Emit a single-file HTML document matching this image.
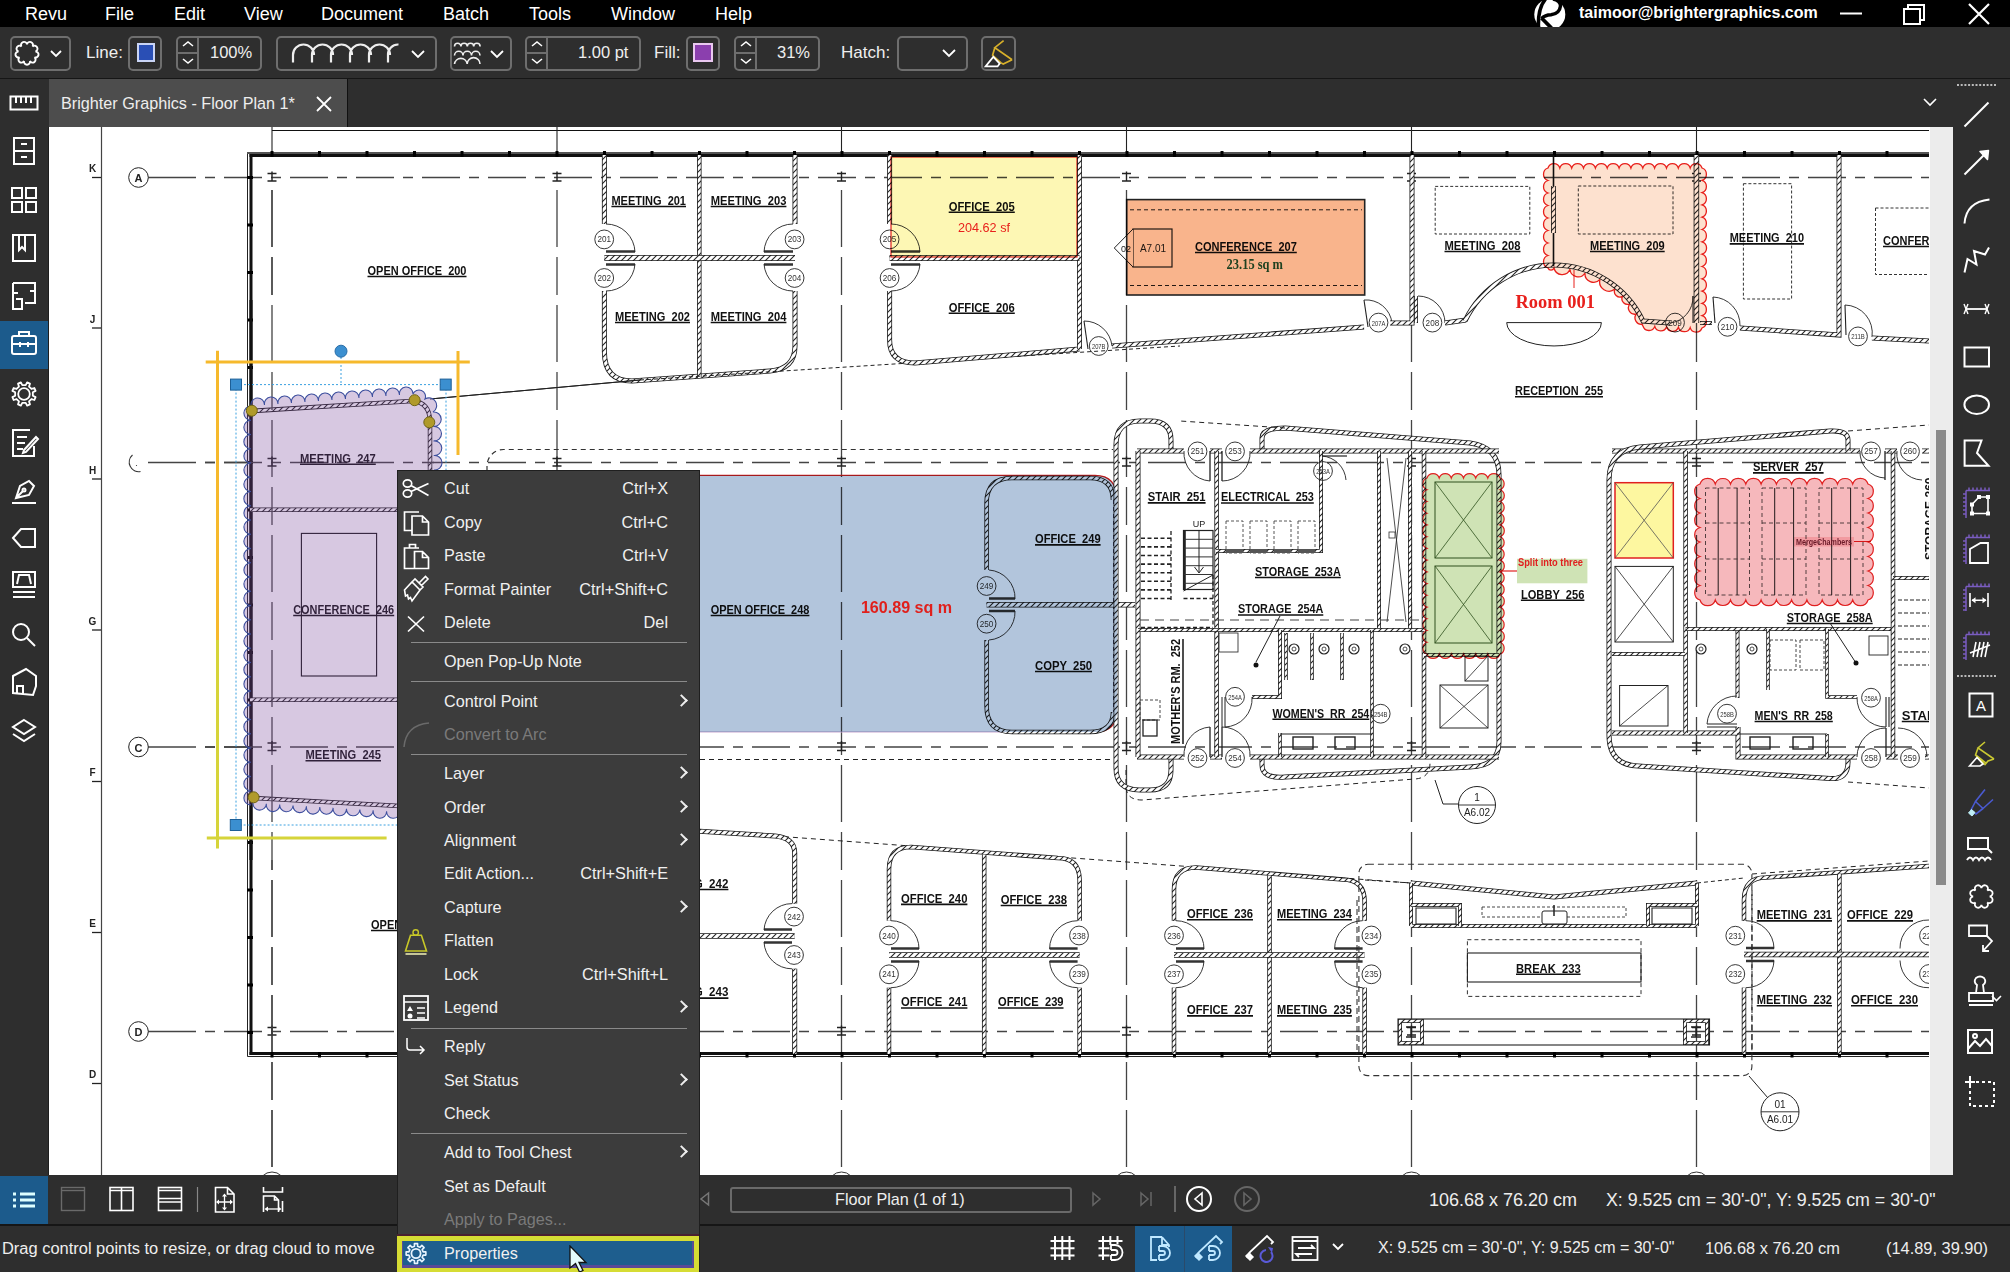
<!DOCTYPE html>
<html><head><meta charset="utf-8">
<style>
*{margin:0;padding:0;box-sizing:border-box}
html,body{width:2010px;height:1272px;overflow:hidden;background:#2d2d2d;font-family:"Liberation Sans",sans-serif;color:#fff;position:relative}
.a{position:absolute}
#menubar{left:0;top:0;width:2010px;height:27px;background:#000}
#menubar span{position:absolute;top:4px;font-size:18px;color:#fff;white-space:nowrap}
#toolbar{left:0;top:27px;width:2010px;height:52px;background:#2e2e2e;border-bottom:1px solid #161616}
.box{position:absolute;border:2px solid #6e6e6e;border-radius:5px;top:9px;height:35px}
.tl{position:absolute;font-size:17px;color:#eee;top:16px;white-space:nowrap}
#tabbar{left:0;top:79px;width:2010px;height:48px;background:#2e2e2e}
#tab{left:49px;top:79px;width:299px;height:48px;background:#4d4d4d;border-right:1px solid #111}
#sidebar{left:0;top:127px;width:49px;height:1049px;background:#2e2e2e;border-right:1px solid #1e1e1e}
#rightbar{left:1953px;top:127px;width:57px;height:1049px;background:#2e2e2e}
#bottombar{left:0;top:1175px;width:2010px;height:51px;background:#2e2e2e;border-bottom:2px solid #161616}
#statusbar{left:0;top:1226px;width:2010px;height:46px;background:#2e2e2e}
#canvas{left:0;top:0}
#menu{left:397px;top:470px;width:303px;height:802px;background:#3c3c3c;border:1px solid #1f1f1f}
.mi{position:absolute;left:46px;font-size:16.2px;color:#f0f0f0;white-space:nowrap;line-height:20px}
.sc{position:absolute;right:31px;font-size:16.3px;color:#f0f0f0;white-space:nowrap;line-height:20px}
.sep{position:absolute;left:13px;width:276px;height:1px;background:#8a8a8a}
.arr{position:absolute;left:279px;width:9px;height:9px;border-right:2px solid #eee;border-top:2px solid #eee;transform:rotate(45deg)}
.dis{color:#7a7a7a}
</style></head><body>
<svg id="canvas" class="a" width="2010" height="1272" viewBox="0 0 2010 1272" font-family="Liberation Sans">
<defs><pattern id="hatch" patternUnits="userSpaceOnUse" width="6" height="6"><rect width="6" height="6" fill="#fff"/><path d="M-1.5 7.5 L7.5 -1.5 M-1.5 1.5 L1.5 -1.5 M4.5 7.5 L7.5 4.5" stroke="#222" stroke-width="1.1"/></pattern><clipPath id="cv"><rect x="49" y="127" width="1880" height="1048"/></clipPath></defs>
<rect x="49" y="127" width="1903" height="1048" fill="#fff"/>
<g clip-path="url(#cv)">
<path d="M101.5 127 V1175" fill="none" stroke="#444" stroke-width="1.2" />
<path d="M92 177.5 H101" fill="none" stroke="#222" stroke-width="1.3" />
<text x="92.5" y="172" font-size="10" font-weight="bold" fill="#222" text-anchor="middle">K</text>
<path d="M92 328.0 H101" fill="none" stroke="#222" stroke-width="1.3" />
<text x="92.5" y="322.5" font-size="10" font-weight="bold" fill="#222" text-anchor="middle">J</text>
<path d="M92 479.0 H101" fill="none" stroke="#222" stroke-width="1.3" />
<text x="92.5" y="473.5" font-size="10" font-weight="bold" fill="#222" text-anchor="middle">H</text>
<path d="M92 630.0 H101" fill="none" stroke="#222" stroke-width="1.3" />
<text x="92.5" y="624.5" font-size="10" font-weight="bold" fill="#222" text-anchor="middle">G</text>
<path d="M92 781.5 H101" fill="none" stroke="#222" stroke-width="1.3" />
<text x="92.5" y="776" font-size="10" font-weight="bold" fill="#222" text-anchor="middle">F</text>
<path d="M92 932.5 H101" fill="none" stroke="#222" stroke-width="1.3" />
<text x="92.5" y="927" font-size="10" font-weight="bold" fill="#222" text-anchor="middle">E</text>
<path d="M92 1083.5 H101" fill="none" stroke="#222" stroke-width="1.3" />
<text x="92.5" y="1078" font-size="10" font-weight="bold" fill="#222" text-anchor="middle">D</text>
<path d="M272 130.5 H1929" fill="none" stroke="#111" stroke-width="1" />
<path d="M148 177.5 H196" fill="none" stroke="#444" stroke-width="1.3" />
<path d="M205 177.5 H1929" fill="none" stroke="#444" stroke-width="1.3" stroke-dasharray="10 9 38 9" />
<circle cx="138.5" cy="177.5" r="9.8" fill="#fff" stroke="#222" stroke-width="1"/>
<text x="138.5" y="182.0" font-size="11" font-weight="bold" fill="#222" text-anchor="middle">A</text>
<path d="M148 462.5 H196" fill="none" stroke="#444" stroke-width="1.3" />
<path d="M205 462.5 H1929" fill="none" stroke="#444" stroke-width="1.3" stroke-dasharray="10 9 38 9" />
<path d="M132.5 455.0 A9.5 9.5 0 0 0 140.5 471.5" fill="none" stroke="#333" stroke-width="1.1"/><circle cx="136.5" cy="465.5" r="0.6" fill="#333"/>
<path d="M148 747 H196" fill="none" stroke="#444" stroke-width="1.3" />
<path d="M205 747 H1929" fill="none" stroke="#444" stroke-width="1.3" stroke-dasharray="10 9 38 9" />
<circle cx="138.5" cy="747" r="9.8" fill="#fff" stroke="#222" stroke-width="1"/>
<text x="138.5" y="751.5" font-size="11" font-weight="bold" fill="#222" text-anchor="middle">C</text>
<path d="M148 1031.5 H196" fill="none" stroke="#444" stroke-width="1.3" />
<path d="M205 1031.5 H1929" fill="none" stroke="#444" stroke-width="1.3" stroke-dasharray="10 9 38 9" />
<circle cx="138.5" cy="1031.5" r="9.8" fill="#fff" stroke="#222" stroke-width="1"/>
<text x="138.5" y="1036.0" font-size="11" font-weight="bold" fill="#222" text-anchor="middle">D</text>
<path d="M272 127 V155" fill="none" stroke="#222" stroke-width="1.1" />
<path d="M272 190 V1175" fill="none" stroke="#444" stroke-width="1.3" stroke-dasharray="57 10 38 10" />
<path d="M267.5 173.5 H276.5 M267.5 181.0 H276.5 M272 171.5 V181.5" fill="none" stroke="#222" stroke-width="1.4" />
<path d="M267.5 458.5 H276.5 M267.5 466.0 H276.5 M272 456.5 V466.5" fill="none" stroke="#222" stroke-width="1.4" />
<path d="M267.5 743 H276.5 M267.5 750.5 H276.5 M272 741 V751" fill="none" stroke="#222" stroke-width="1.4" />
<path d="M267.5 1027.5 H276.5 M267.5 1035.0 H276.5 M272 1025.5 V1035.5" fill="none" stroke="#222" stroke-width="1.4" />
<circle cx="272" cy="1185" r="13" fill="#fff" stroke="#333" stroke-width="1"/>
<path d="M557 127 V155" fill="none" stroke="#222" stroke-width="1.1" />
<path d="M557 190 V1175" fill="none" stroke="#444" stroke-width="1.3" stroke-dasharray="57 10 38 10" />
<path d="M552.5 173.5 H561.5 M552.5 181.0 H561.5 M557 171.5 V181.5" fill="none" stroke="#222" stroke-width="1.4" />
<path d="M552.5 458.5 H561.5 M552.5 466.0 H561.5 M557 456.5 V466.5" fill="none" stroke="#222" stroke-width="1.4" />
<path d="M552.5 743 H561.5 M552.5 750.5 H561.5 M557 741 V751" fill="none" stroke="#222" stroke-width="1.4" />
<path d="M552.5 1027.5 H561.5 M552.5 1035.0 H561.5 M557 1025.5 V1035.5" fill="none" stroke="#222" stroke-width="1.4" />
<circle cx="557" cy="1185" r="13" fill="#fff" stroke="#333" stroke-width="1"/>
<path d="M841.5 127 V155" fill="none" stroke="#222" stroke-width="1.1" />
<path d="M841.5 190 V1175" fill="none" stroke="#444" stroke-width="1.3" stroke-dasharray="57 10 38 10" />
<path d="M837.0 173.5 H846.0 M837.0 181.0 H846.0 M841.5 171.5 V181.5" fill="none" stroke="#222" stroke-width="1.4" />
<path d="M837.0 458.5 H846.0 M837.0 466.0 H846.0 M841.5 456.5 V466.5" fill="none" stroke="#222" stroke-width="1.4" />
<path d="M837.0 743 H846.0 M837.0 750.5 H846.0 M841.5 741 V751" fill="none" stroke="#222" stroke-width="1.4" />
<path d="M837.0 1027.5 H846.0 M837.0 1035.0 H846.0 M841.5 1025.5 V1035.5" fill="none" stroke="#222" stroke-width="1.4" />
<circle cx="841.5" cy="1185" r="13" fill="#fff" stroke="#333" stroke-width="1"/>
<path d="M1126.5 127 V155" fill="none" stroke="#222" stroke-width="1.1" />
<path d="M1126.5 190 V1175" fill="none" stroke="#444" stroke-width="1.3" stroke-dasharray="57 10 38 10" />
<path d="M1122.0 173.5 H1131.0 M1122.0 181.0 H1131.0 M1126.5 171.5 V181.5" fill="none" stroke="#222" stroke-width="1.4" />
<path d="M1122.0 458.5 H1131.0 M1122.0 466.0 H1131.0 M1126.5 456.5 V466.5" fill="none" stroke="#222" stroke-width="1.4" />
<path d="M1122.0 743 H1131.0 M1122.0 750.5 H1131.0 M1126.5 741 V751" fill="none" stroke="#222" stroke-width="1.4" />
<path d="M1122.0 1027.5 H1131.0 M1122.0 1035.0 H1131.0 M1126.5 1025.5 V1035.5" fill="none" stroke="#222" stroke-width="1.4" />
<circle cx="1126.5" cy="1185" r="13" fill="#fff" stroke="#333" stroke-width="1"/>
<path d="M1411.5 127 V155" fill="none" stroke="#222" stroke-width="1.1" />
<path d="M1411.5 190 V1175" fill="none" stroke="#444" stroke-width="1.3" stroke-dasharray="57 10 38 10" />
<path d="M1407.0 173.5 H1416.0 M1407.0 181.0 H1416.0 M1411.5 171.5 V181.5" fill="none" stroke="#222" stroke-width="1.4" />
<path d="M1407.0 458.5 H1416.0 M1407.0 466.0 H1416.0 M1411.5 456.5 V466.5" fill="none" stroke="#222" stroke-width="1.4" />
<path d="M1407.0 743 H1416.0 M1407.0 750.5 H1416.0 M1411.5 741 V751" fill="none" stroke="#222" stroke-width="1.4" />
<path d="M1407.0 1027.5 H1416.0 M1407.0 1035.0 H1416.0 M1411.5 1025.5 V1035.5" fill="none" stroke="#222" stroke-width="1.4" />
<circle cx="1411.5" cy="1185" r="13" fill="#fff" stroke="#333" stroke-width="1"/>
<path d="M1696.5 127 V155" fill="none" stroke="#222" stroke-width="1.1" />
<path d="M1696.5 190 V1175" fill="none" stroke="#444" stroke-width="1.3" stroke-dasharray="57 10 38 10" />
<path d="M1692.0 173.5 H1701.0 M1692.0 181.0 H1701.0 M1696.5 171.5 V181.5" fill="none" stroke="#222" stroke-width="1.4" />
<path d="M1692.0 458.5 H1701.0 M1692.0 466.0 H1701.0 M1696.5 456.5 V466.5" fill="none" stroke="#222" stroke-width="1.4" />
<path d="M1692.0 743 H1701.0 M1692.0 750.5 H1701.0 M1696.5 741 V751" fill="none" stroke="#222" stroke-width="1.4" />
<path d="M1692.0 1027.5 H1701.0 M1692.0 1035.0 H1701.0 M1696.5 1025.5 V1035.5" fill="none" stroke="#222" stroke-width="1.4" />
<circle cx="1696.5" cy="1185" r="13" fill="#fff" stroke="#333" stroke-width="1"/>
<rect x="249.5" y="154" width="1680" height="3" fill="#111"/>
<rect x="249.5" y="154" width="3" height="901" fill="#111"/>
<rect x="249.5" y="1052" width="1680" height="3" fill="#111"/>
<rect x="247" y="152" width="1682" height="2" fill="#555"/>
<path d="M247.5 154 V1056.5 H1929" fill="none" stroke="#222" stroke-width="1" />
<rect x="270.5" y="151" width="3" height="6" fill="#000"/>
<rect x="270.5" y="1052" width="3" height="5.5" fill="#000"/>
<rect x="318.0" y="151" width="3" height="6" fill="#000"/>
<rect x="318.0" y="1052" width="3" height="5.5" fill="#000"/>
<rect x="365.5" y="151" width="3" height="6" fill="#000"/>
<rect x="365.5" y="1052" width="3" height="5.5" fill="#000"/>
<rect x="413.0" y="151" width="3" height="6" fill="#000"/>
<rect x="413.0" y="1052" width="3" height="5.5" fill="#000"/>
<rect x="460.5" y="151" width="3" height="6" fill="#000"/>
<rect x="460.5" y="1052" width="3" height="5.5" fill="#000"/>
<rect x="508.0" y="151" width="3" height="6" fill="#000"/>
<rect x="508.0" y="1052" width="3" height="5.5" fill="#000"/>
<rect x="555.5" y="151" width="3" height="6" fill="#000"/>
<rect x="555.5" y="1052" width="3" height="5.5" fill="#000"/>
<rect x="603.0" y="151" width="3" height="6" fill="#000"/>
<rect x="603.0" y="1052" width="3" height="5.5" fill="#000"/>
<rect x="650.5" y="151" width="3" height="6" fill="#000"/>
<rect x="650.5" y="1052" width="3" height="5.5" fill="#000"/>
<rect x="698.0" y="151" width="3" height="6" fill="#000"/>
<rect x="698.0" y="1052" width="3" height="5.5" fill="#000"/>
<rect x="745.5" y="151" width="3" height="6" fill="#000"/>
<rect x="745.5" y="1052" width="3" height="5.5" fill="#000"/>
<rect x="793.0" y="151" width="3" height="6" fill="#000"/>
<rect x="793.0" y="1052" width="3" height="5.5" fill="#000"/>
<rect x="840.5" y="151" width="3" height="6" fill="#000"/>
<rect x="840.5" y="1052" width="3" height="5.5" fill="#000"/>
<rect x="888.0" y="151" width="3" height="6" fill="#000"/>
<rect x="888.0" y="1052" width="3" height="5.5" fill="#000"/>
<rect x="935.5" y="151" width="3" height="6" fill="#000"/>
<rect x="935.5" y="1052" width="3" height="5.5" fill="#000"/>
<rect x="983.0" y="151" width="3" height="6" fill="#000"/>
<rect x="983.0" y="1052" width="3" height="5.5" fill="#000"/>
<rect x="1030.5" y="151" width="3" height="6" fill="#000"/>
<rect x="1030.5" y="1052" width="3" height="5.5" fill="#000"/>
<rect x="1078.0" y="151" width="3" height="6" fill="#000"/>
<rect x="1078.0" y="1052" width="3" height="5.5" fill="#000"/>
<rect x="1125.5" y="151" width="3" height="6" fill="#000"/>
<rect x="1125.5" y="1052" width="3" height="5.5" fill="#000"/>
<rect x="1173.0" y="151" width="3" height="6" fill="#000"/>
<rect x="1173.0" y="1052" width="3" height="5.5" fill="#000"/>
<rect x="1220.5" y="151" width="3" height="6" fill="#000"/>
<rect x="1220.5" y="1052" width="3" height="5.5" fill="#000"/>
<rect x="1268.0" y="151" width="3" height="6" fill="#000"/>
<rect x="1268.0" y="1052" width="3" height="5.5" fill="#000"/>
<rect x="1315.5" y="151" width="3" height="6" fill="#000"/>
<rect x="1315.5" y="1052" width="3" height="5.5" fill="#000"/>
<rect x="1363.0" y="151" width="3" height="6" fill="#000"/>
<rect x="1363.0" y="1052" width="3" height="5.5" fill="#000"/>
<rect x="1410.5" y="151" width="3" height="6" fill="#000"/>
<rect x="1410.5" y="1052" width="3" height="5.5" fill="#000"/>
<rect x="1458.0" y="151" width="3" height="6" fill="#000"/>
<rect x="1458.0" y="1052" width="3" height="5.5" fill="#000"/>
<rect x="1505.5" y="151" width="3" height="6" fill="#000"/>
<rect x="1505.5" y="1052" width="3" height="5.5" fill="#000"/>
<rect x="1553.0" y="151" width="3" height="6" fill="#000"/>
<rect x="1553.0" y="1052" width="3" height="5.5" fill="#000"/>
<rect x="1600.5" y="151" width="3" height="6" fill="#000"/>
<rect x="1600.5" y="1052" width="3" height="5.5" fill="#000"/>
<rect x="1648.0" y="151" width="3" height="6" fill="#000"/>
<rect x="1648.0" y="1052" width="3" height="5.5" fill="#000"/>
<rect x="1695.5" y="151" width="3" height="6" fill="#000"/>
<rect x="1695.5" y="1052" width="3" height="5.5" fill="#000"/>
<rect x="1743.0" y="151" width="3" height="6" fill="#000"/>
<rect x="1743.0" y="1052" width="3" height="5.5" fill="#000"/>
<rect x="1790.5" y="151" width="3" height="6" fill="#000"/>
<rect x="1790.5" y="1052" width="3" height="5.5" fill="#000"/>
<rect x="1838.0" y="151" width="3" height="6" fill="#000"/>
<rect x="1838.0" y="1052" width="3" height="5.5" fill="#000"/>
<rect x="1885.5" y="151" width="3" height="6" fill="#000"/>
<rect x="1885.5" y="1052" width="3" height="5.5" fill="#000"/>
<rect x="1933.0" y="151" width="3" height="6" fill="#000"/>
<rect x="1933.0" y="1052" width="3" height="5.5" fill="#000"/>
<rect x="247" y="176.0" width="6" height="3" fill="#000"/>
<rect x="247" y="223.5" width="6" height="3" fill="#000"/>
<rect x="247" y="271.0" width="6" height="3" fill="#000"/>
<rect x="247" y="318.5" width="6" height="3" fill="#000"/>
<rect x="247" y="366.0" width="6" height="3" fill="#000"/>
<rect x="247" y="413.5" width="6" height="3" fill="#000"/>
<rect x="247" y="461.0" width="6" height="3" fill="#000"/>
<rect x="247" y="508.5" width="6" height="3" fill="#000"/>
<rect x="247" y="556.0" width="6" height="3" fill="#000"/>
<rect x="247" y="603.5" width="6" height="3" fill="#000"/>
<rect x="247" y="651.0" width="6" height="3" fill="#000"/>
<rect x="247" y="698.5" width="6" height="3" fill="#000"/>
<rect x="247" y="746.0" width="6" height="3" fill="#000"/>
<rect x="247" y="793.5" width="6" height="3" fill="#000"/>
<rect x="247" y="841.0" width="6" height="3" fill="#000"/>
<rect x="247" y="888.5" width="6" height="3" fill="#000"/>
<rect x="247" y="936.0" width="6" height="3" fill="#000"/>
<rect x="247" y="983.5" width="6" height="3" fill="#000"/>
<rect x="247" y="1031.0" width="6" height="3" fill="#000"/>
<path d="M604.4 155 V224" fill="none" stroke="#1a1a1a" stroke-width="5" />
<path d="M604.4 155 V224" fill="none" stroke="url(#hatch)" stroke-width="3.4" />
<path d="M604.4 291 V352 Q604.4 381 632 381 L770 371 Q795 369 795 346 V291" fill="none" stroke="#1a1a1a" stroke-width="5" />
<path d="M604.4 291 V352 Q604.4 381 632 381 L770 371 Q795 369 795 346 V291" fill="none" stroke="url(#hatch)" stroke-width="3.4" />
<path d="M795 224 V155" fill="none" stroke="#1a1a1a" stroke-width="5" />
<path d="M795 224 V155" fill="none" stroke="url(#hatch)" stroke-width="3.4" />
<path d="M699.3 155 V378" fill="none" stroke="#1a1a1a" stroke-width="4.5" />
<path d="M699.3 155 V378" fill="none" stroke="url(#hatch)" stroke-width="2.9" />
<path d="M604.4 258 H795" fill="none" stroke="#1a1a1a" stroke-width="6" />
<path d="M604.4 258 H795" fill="none" stroke="url(#hatch)" stroke-width="4.4" />
<path d="M606 251.5 H635 M606 264.5 H635 M764 251.5 H793 M764 264.5 H793" fill="none" stroke="#333" stroke-width="2.4" />
<path d="M606.0 224.0 A29 29 0 0 1 635.0 252.0" fill="none" stroke="#222" stroke-width="0.9"/>
<path d="M635.0 264.0 A29 29 0 0 1 606.0 291.0" fill="none" stroke="#222" stroke-width="0.9"/>
<path d="M764.0 252.0 A29 29 0 0 1 793.0 224.0" fill="none" stroke="#222" stroke-width="0.9"/>
<path d="M793.0 291.0 A29 29 0 0 1 764.0 264.0" fill="none" stroke="#222" stroke-width="0.9"/>
<circle cx="604.2" cy="239.4" r="9.4" fill="none" stroke="#222" stroke-width="0.9"/>
<text x="604.2" y="242.4" font-size="8.5" fill="#333" text-anchor="middle" textLength="13.6" lengthAdjust="spacingAndGlyphs">201</text>
<circle cx="604.2" cy="278.0" r="9.4" fill="none" stroke="#222" stroke-width="0.9"/>
<text x="604.2" y="281.0" font-size="8.5" fill="#333" text-anchor="middle" textLength="13.6" lengthAdjust="spacingAndGlyphs">202</text>
<circle cx="794.6" cy="239.4" r="9.4" fill="none" stroke="#222" stroke-width="0.9"/>
<text x="794.6" y="242.4" font-size="8.5" fill="#333" text-anchor="middle" textLength="13.6" lengthAdjust="spacingAndGlyphs">203</text>
<circle cx="794.6" cy="278.0" r="9.4" fill="none" stroke="#222" stroke-width="0.9"/>
<text x="794.6" y="281.0" font-size="8.5" fill="#333" text-anchor="middle" textLength="13.6" lengthAdjust="spacingAndGlyphs">204</text>
<text x="611.4" y="204.8" font-size="13" font-weight="bold" fill="#111" textLength="74.6" lengthAdjust="spacingAndGlyphs" font-family="Liberation Sans" xml:space="preserve">MEETING  201</text>
<path d="M611.4 206.5 H686.0" stroke="#111" stroke-width="1.6"/>
<text x="710.7" y="204.8" font-size="13" font-weight="bold" fill="#111" textLength="75.7" lengthAdjust="spacingAndGlyphs" font-family="Liberation Sans" xml:space="preserve">MEETING  203</text>
<path d="M710.7 206.5 H786.4" stroke="#111" stroke-width="1.6"/>
<text x="615.0" y="320.8" font-size="13" font-weight="bold" fill="#111" textLength="75.0" lengthAdjust="spacingAndGlyphs" font-family="Liberation Sans" xml:space="preserve">MEETING  202</text>
<path d="M615.0 322.5 H690.0" stroke="#111" stroke-width="1.6"/>
<text x="710.7" y="320.8" font-size="13" font-weight="bold" fill="#111" textLength="75.7" lengthAdjust="spacingAndGlyphs" font-family="Liberation Sans" xml:space="preserve">MEETING  204</text>
<path d="M710.7 322.5 H786.4" stroke="#111" stroke-width="1.6"/>
<path d="M430 399 L640 380" fill="none" stroke="#222" stroke-width="1.1" />
<path d="M640 380 L1180 346" fill="none" stroke="#222" stroke-width="1" stroke-dasharray="4 3" />
<path d="M889.6 155 V224" fill="none" stroke="#1a1a1a" stroke-width="5" />
<path d="M889.6 155 V224" fill="none" stroke="url(#hatch)" stroke-width="3.4" />
<path d="M889.6 291 V340 Q889.6 363 915 363 L1079.5 349" fill="none" stroke="#1a1a1a" stroke-width="5" />
<path d="M889.6 291 V340 Q889.6 363 915 363 L1079.5 349" fill="none" stroke="url(#hatch)" stroke-width="3.4" />
<path d="M1079.5 155 V349" fill="none" stroke="#1a1a1a" stroke-width="5" />
<path d="M1079.5 155 V349" fill="none" stroke="url(#hatch)" stroke-width="3.4" />
<path d="M889.6 258 H1079.5" fill="none" stroke="#1a1a1a" stroke-width="6" />
<path d="M889.6 258 H1079.5" fill="none" stroke="url(#hatch)" stroke-width="4.4" />
<path d="M891 251.5 H920 M891 264.5 H920" fill="none" stroke="#333" stroke-width="2.4" />
<path d="M891.0 224.0 A29 29 0 0 1 920.0 252.0" fill="none" stroke="#222" stroke-width="0.9"/>
<path d="M920.0 264.0 A29 29 0 0 1 891.0 291.0" fill="none" stroke="#222" stroke-width="0.9"/>
<circle cx="889.6" cy="239.4" r="9.4" fill="none" stroke="#222" stroke-width="0.9"/>
<text x="889.6" y="242.4" font-size="8.5" fill="#333" text-anchor="middle" textLength="13.6" lengthAdjust="spacingAndGlyphs">205</text>
<circle cx="889.6" cy="278.0" r="9.4" fill="none" stroke="#222" stroke-width="0.9"/>
<text x="889.6" y="281.0" font-size="8.5" fill="#333" text-anchor="middle" textLength="13.6" lengthAdjust="spacingAndGlyphs">206</text>
<text x="948.7" y="210.6" font-size="13" font-weight="bold" fill="#111" textLength="66.1" lengthAdjust="spacingAndGlyphs" font-family="Liberation Sans" xml:space="preserve">OFFICE  205</text>
<path d="M948.7 212.3 H1014.8" stroke="#111" stroke-width="1.6"/>
<text x="948.7" y="311.6" font-size="13" font-weight="bold" fill="#111" textLength="66.1" lengthAdjust="spacingAndGlyphs" font-family="Liberation Sans" xml:space="preserve">OFFICE  206</text>
<path d="M948.7 313.3 H1014.8" stroke="#111" stroke-width="1.6"/>
<path d="M1084 321 L1088 349" fill="none" stroke="#222" stroke-width="1.1" />
<path d="M1084.0 321.0 A28 28 0 0 1 1112.0 346.0" fill="none" stroke="#222" stroke-width="0.9"/>
<circle cx="1098.7" cy="346.0" r="9.4" fill="none" stroke="#222" stroke-width="0.9"/>
<text x="1098.7" y="349.0" font-size="7.5" fill="#333" text-anchor="middle" textLength="13.6" lengthAdjust="spacingAndGlyphs">207B</text>
<path d="M1112 346 L1364 327" fill="none" stroke="#1a1a1a" stroke-width="5" />
<path d="M1112 346 L1364 327" fill="none" stroke="url(#hatch)" stroke-width="3.4" />
<path d="M1364 300 L1368 327" fill="none" stroke="#222" stroke-width="1.1" />
<path d="M1364.0 300.0 A26 26 0 0 1 1392.0 323.0" fill="none" stroke="#222" stroke-width="0.9"/>
<path d="M1390 323 H1412 V155" fill="none" stroke="#1a1a1a" stroke-width="5" />
<path d="M1390 323 H1412 V155" fill="none" stroke="url(#hatch)" stroke-width="3.4" />
<circle cx="1378.5" cy="322.6" r="9.4" fill="none" stroke="#222" stroke-width="0.9"/>
<text x="1378.5" y="325.6" font-size="7.5" fill="#333" text-anchor="middle" textLength="13.6" lengthAdjust="spacingAndGlyphs">207A</text>
<path d="M1130 209.8 H1362 M1130 285.5 H1362" fill="none" stroke="#222" stroke-width="1" stroke-dasharray="4 3" />
<rect x="1133" y="229" width="39" height="38" fill="none" stroke="#222" stroke-width="1.2"/>
<path d="M1133 229 L1114.3 248 L1133 267" fill="#fff" stroke="#222" stroke-width="1"/>
<text x="1153" y="252" font-size="10" fill="#222" text-anchor="middle">A7.01</text>
<text x="1126" y="252" font-size="9" fill="#222" text-anchor="middle">02</text>
<text x="1195.0" y="250.8" font-size="13" font-weight="bold" fill="#111" textLength="101.8" lengthAdjust="spacingAndGlyphs" font-family="Liberation Sans" xml:space="preserve">CONFERENCE  207</text>
<path d="M1195.0 252.5 H1296.8" stroke="#111" stroke-width="1.6"/>
<text x="1226.6" y="269.0" font-size="14" font-weight="bold" fill="#1f5c3a" textLength="56.4" lengthAdjust="spacingAndGlyphs" font-family="Liberation Serif" xml:space="preserve">23.15 sq m</text>
<path d="M1416 323 V296" fill="none" stroke="#1a1a1a" stroke-width="4" />
<path d="M1416 323 V296" fill="none" stroke="url(#hatch)" stroke-width="2.4" />
<path d="M1418.0 296.0 A27 27 0 0 1 1445.0 323.0" fill="none" stroke="#222" stroke-width="0.9"/>
<circle cx="1432.4" cy="322.6" r="9.4" fill="none" stroke="#222" stroke-width="0.9"/>
<text x="1432.4" y="325.6" font-size="8.5" fill="#333" text-anchor="middle" textLength="13.6" lengthAdjust="spacingAndGlyphs">208</text>
<path d="M1445 323 L1466 320" fill="none" stroke="#1a1a1a" stroke-width="5" />
<path d="M1445 323 L1466 320" fill="none" stroke="url(#hatch)" stroke-width="3.4" />
<rect x="1435.2" y="186.4" width="94.6" height="47.6" fill="none" stroke="#333" stroke-width="1" stroke-dasharray="3 2"/>
<text x="1444.5" y="249.8" font-size="13" font-weight="bold" fill="#111" textLength="76.0" lengthAdjust="spacingAndGlyphs" font-family="Liberation Sans" xml:space="preserve">MEETING  208</text>
<path d="M1444.5 251.5 H1520.5" stroke="#111" stroke-width="1.6"/>
<path d="M1465 321 A98.7 98.7 0 0 1 1643 321 L1670 323" fill="none" stroke="#1a1a1a" stroke-width="5" />
<path d="M1465 321 A98.7 98.7 0 0 1 1643 321 L1670 323" fill="none" stroke="url(#hatch)" stroke-width="3.4" />
<path d="M1553.5 155 V266" fill="none" stroke="#111" stroke-width="1.6" />
<path d="M1553.5 186 V233" fill="none" stroke="#1a1a1a" stroke-width="5" />
<path d="M1553.5 186 V233" fill="none" stroke="url(#hatch)" stroke-width="3.4" />
<path d="M1696.4 155 V323" fill="none" stroke="#1a1a1a" stroke-width="5.5" />
<path d="M1696.4 155 V323" fill="none" stroke="url(#hatch)" stroke-width="3.9" />
<rect x="1578.3" y="186" width="94.7" height="48" fill="none" stroke="#333" stroke-width="1" stroke-dasharray="3 2"/>
<text x="1590.0" y="249.8" font-size="13" font-weight="bold" fill="#111" textLength="74.7" lengthAdjust="spacingAndGlyphs" font-family="Liberation Sans" xml:space="preserve">MEETING  209</text>
<path d="M1590.0 251.5 H1664.7" stroke="#111" stroke-width="1.6"/>
<path d="M1670.0 323.0 A26 26 0 0 0 1693.0 296.0" fill="none" stroke="#222" stroke-width="0.9"/>
<path d="M1693 296 V323" fill="none" stroke="#222" stroke-width="1.1" />
<circle cx="1675.0" cy="322.6" r="9.4" fill="none" stroke="#222" stroke-width="0.9"/>
<text x="1675.0" y="325.6" font-size="8.5" fill="#333" text-anchor="middle" textLength="13.6" lengthAdjust="spacingAndGlyphs">209</text>
<path d="M1574 270 V288" fill="none" stroke="#e8201c" stroke-width="1" />
<text x="1515.5" y="307.5" font-size="19.5" font-weight="bold" fill="#e8201c" textLength="79.5" lengthAdjust="spacingAndGlyphs" font-family="Liberation Serif" xml:space="preserve">Room 001</text>
<path d="M1506.7 322.6 H1601.4 A47.35 23.4 0 0 1 1506.7 322.6 Z" fill="none" stroke="#222" stroke-width="1"/>
<text x="1515.0" y="395.0" font-size="13" font-weight="bold" fill="#111" textLength="88.0" lengthAdjust="spacingAndGlyphs" font-family="Liberation Sans" xml:space="preserve">RECEPTION  255</text>
<path d="M1515.0 396.7 H1603.0" stroke="#111" stroke-width="1.6"/>
<path d="M1700 323 H1712" fill="none" stroke="#1a1a1a" stroke-width="4" />
<path d="M1700 323 H1712" fill="none" stroke="url(#hatch)" stroke-width="2.4" />
<path d="M1713 297 L1715 323" fill="none" stroke="#222" stroke-width="1.1" />
<path d="M1713.0 297.0 A28 28 0 0 1 1740.0 326.0" fill="none" stroke="#222" stroke-width="0.9"/>
<circle cx="1727.5" cy="326.8" r="9.4" fill="none" stroke="#222" stroke-width="0.9"/>
<text x="1727.5" y="329.8" font-size="8.5" fill="#333" text-anchor="middle" textLength="13.6" lengthAdjust="spacingAndGlyphs">210</text>
<path d="M1740 328 L1839 335 V155" fill="none" stroke="#1a1a1a" stroke-width="5" />
<path d="M1740 328 L1839 335 V155" fill="none" stroke="url(#hatch)" stroke-width="3.4" />
<path d="M1845 305 L1846 335" fill="none" stroke="#222" stroke-width="1.1" />
<path d="M1845.0 305.0 A28 28 0 0 1 1872.0 337.0" fill="none" stroke="#222" stroke-width="0.9"/>
<circle cx="1858.0" cy="336.4" r="9.4" fill="none" stroke="#222" stroke-width="0.9"/>
<text x="1858.0" y="339.4" font-size="7.5" fill="#333" text-anchor="middle" textLength="13.6" lengthAdjust="spacingAndGlyphs">211B</text>
<path d="M1872 338 L1929 341" fill="none" stroke="#1a1a1a" stroke-width="5" />
<path d="M1872 338 L1929 341" fill="none" stroke="url(#hatch)" stroke-width="3.4" />
<rect x="1743.4" y="183.7" width="48.2" height="115.3" fill="none" stroke="#333" stroke-width="1" stroke-dasharray="3 2"/>
<text x="1729.7" y="242.2" font-size="13" font-weight="bold" fill="#111" textLength="74.3" lengthAdjust="spacingAndGlyphs" font-family="Liberation Sans" xml:space="preserve">MEETING  210</text>
<path d="M1729.7 243.9 H1804.0" stroke="#111" stroke-width="1.6"/>
<rect x="1875.5" y="208" width="80" height="66.5" fill="none" stroke="#333" stroke-width="1" stroke-dasharray="3 2"/>
<text x="1883.0" y="244.8" font-size="13" font-weight="bold" fill="#111" textLength="77.0" lengthAdjust="spacingAndGlyphs" font-family="Liberation Sans" xml:space="preserve">CONFERENCE</text>
<path d="M1883.0 246.5 H1960.0" stroke="#111" stroke-width="1.6"/>
<text x="367.5" y="274.8" font-size="13" font-weight="bold" fill="#111" textLength="99.0" lengthAdjust="spacingAndGlyphs" font-family="Liberation Sans" xml:space="preserve">OPEN OFFICE  200</text>
<path d="M367.5 276.5 H466.5" stroke="#111" stroke-width="1.6"/>
<path d="M487 480 V466 A16.5 16.5 0 0 1 503.5 449.5 H1113" fill="none" stroke="#333" stroke-width="1.2" stroke-dasharray="5 4" />
<path d="M700 759.5 H1113" fill="none" stroke="#222" stroke-width="1" stroke-dasharray="5 4" />
<path d="M700 475.3 H1095 Q1117 475.3 1117 500 V710 Q1117 732 1095 732" fill="none" stroke="#d42020" stroke-width="1.3"/>
<path d="M700 732 H1095" fill="none" stroke="#c9a8d0" stroke-width="1.2"/>
<path d="M986.6 570 V503 Q986.6 478 1012 478 H1090 Q1113 478 1113 500" fill="none" stroke="#1a1a1a" stroke-width="4.5" />
<path d="M986.6 570 V503 Q986.6 478 1012 478 H1090 Q1113 478 1113 500" fill="none" stroke="url(#hatch)" stroke-width="2.9" />
<path d="M986.6 640 V706 Q986.6 732 1012 732 H1090 Q1113 732 1113 712" fill="none" stroke="#1a1a1a" stroke-width="4.5" />
<path d="M986.6 640 V706 Q986.6 732 1012 732 H1090 Q1113 732 1113 712" fill="none" stroke="url(#hatch)" stroke-width="2.9" />
<path d="M1113.6 500 V712" fill="none" stroke="#335" stroke-width="1" stroke-dasharray="4 3" />
<path d="M986.6 604.7 H1135" fill="none" stroke="#1a1a1a" stroke-width="5.5" />
<path d="M986.6 604.7 H1135" fill="none" stroke="url(#hatch)" stroke-width="3.9" />
<path d="M989 598.5 H1015 M989 611 H1015" fill="none" stroke="#333" stroke-width="2.4" />
<path d="M989.0 570.0 A28 28 0 0 1 1015.0 599.0" fill="none" stroke="#222" stroke-width="0.9"/>
<path d="M1015.0 611.0 A28 28 0 0 1 989.0 640.0" fill="none" stroke="#222" stroke-width="0.9"/>
<circle cx="986.6" cy="586.0" r="9.4" fill="none" stroke="#222" stroke-width="0.9"/>
<text x="986.6" y="589.0" font-size="8.5" fill="#333" text-anchor="middle" textLength="13.6" lengthAdjust="spacingAndGlyphs">249</text>
<circle cx="986.6" cy="623.7" r="9.4" fill="none" stroke="#222" stroke-width="0.9"/>
<text x="986.6" y="626.7" font-size="8.5" fill="#333" text-anchor="middle" textLength="13.6" lengthAdjust="spacingAndGlyphs">250</text>
<text x="1035.0" y="543.2" font-size="13" font-weight="bold" fill="#111" textLength="65.6" lengthAdjust="spacingAndGlyphs" font-family="Liberation Sans" xml:space="preserve">OFFICE  249</text>
<path d="M1035.0 544.9 H1100.6" stroke="#111" stroke-width="1.6"/>
<text x="1035.0" y="669.8" font-size="13" font-weight="bold" fill="#111" textLength="57.0" lengthAdjust="spacingAndGlyphs" font-family="Liberation Sans" xml:space="preserve">COPY  250</text>
<path d="M1035.0 671.5 H1092.0" stroke="#111" stroke-width="1.6"/>
<text x="710.7" y="613.8" font-size="13" font-weight="bold" fill="#111" textLength="98.7" lengthAdjust="spacingAndGlyphs" font-family="Liberation Sans" xml:space="preserve">OPEN OFFICE  248</text>
<path d="M710.7 615.5 H809.4" stroke="#111" stroke-width="1.6"/>
<path d="M1171 451 V440 Q1171 421 1150 421 H1140 Q1116 421 1116 445 V768 Q1116 790 1140 790 H1150 Q1171 790 1171 770 V757" fill="none" stroke="#1a1a1a" stroke-width="5" />
<path d="M1171 451 V440 Q1171 421 1150 421 H1140 Q1116 421 1116 445 V768 Q1116 790 1140 790 H1150 Q1171 790 1171 770 V757" fill="none" stroke="url(#hatch)" stroke-width="3.4" />
<path d="M1262 451 V438 Q1262 428 1285 428 L1470 443 Q1499 447 1499 475 V742 Q1499 766 1470 767 L1285 777 Q1262 779 1262 765 V757" fill="none" stroke="#1a1a1a" stroke-width="5" />
<path d="M1262 451 V438 Q1262 428 1285 428 L1470 443 Q1499 447 1499 475 V742 Q1499 766 1470 767 L1285 777 Q1262 779 1262 765 V757" fill="none" stroke="url(#hatch)" stroke-width="3.4" />
<path d="M1285 428 L1180 421" fill="none" stroke="#222" stroke-width="1" stroke-dasharray="5 4" />
<path d="M1126 770 V786 Q1126 800 1142 800 L1415 779 Q1430 778 1430 763" fill="none" stroke="#222" stroke-width="1" stroke-dasharray="5 4" />
<path d="M1137 451 H1184 M1210 451 H1222 M1250 451 H1499" fill="none" stroke="#1a1a1a" stroke-width="5" />
<path d="M1137 451 H1184 M1210 451 H1222 M1250 451 H1499" fill="none" stroke="url(#hatch)" stroke-width="3.4" />
<path d="M1137 757 H1184 M1210 757 H1222 M1250 757 H1499" fill="none" stroke="#1a1a1a" stroke-width="5" />
<path d="M1137 757 H1184 M1210 757 H1222 M1250 757 H1499" fill="none" stroke="url(#hatch)" stroke-width="3.4" />
<path d="M1138 451 V757" fill="none" stroke="#1a1a1a" stroke-width="5" />
<path d="M1138 451 V757" fill="none" stroke="url(#hatch)" stroke-width="3.4" />
<path d="M1216.6 451 V757" fill="none" stroke="#1a1a1a" stroke-width="4.5" />
<path d="M1216.6 451 V757" fill="none" stroke="url(#hatch)" stroke-width="2.9" />
<path d="M1321 451 V551 H1216" fill="none" stroke="#1a1a1a" stroke-width="4" />
<path d="M1321 451 V551 H1216" fill="none" stroke="url(#hatch)" stroke-width="2.4" />
<path d="M1379 451 V630 M1410 451 V630" fill="none" stroke="#1a1a1a" stroke-width="4" />
<path d="M1379 451 V630 M1410 451 V630" fill="none" stroke="url(#hatch)" stroke-width="2.4" />
<path d="M1424 451 V757" fill="none" stroke="#1a1a1a" stroke-width="4.5" />
<path d="M1424 451 V757" fill="none" stroke="url(#hatch)" stroke-width="2.9" />
<path d="M1138 630 H1424" fill="none" stroke="#1a1a1a" stroke-width="4" />
<path d="M1138 630 H1424" fill="none" stroke="url(#hatch)" stroke-width="2.4" />
<path d="M1424 655 H1499" fill="none" stroke="#1a1a1a" stroke-width="4" />
<path d="M1424 655 H1499" fill="none" stroke="url(#hatch)" stroke-width="2.4" />
<path d="M1210 451 V481 M1222 451 V481" fill="none" stroke="#222" stroke-width="1.3" />
<path d="M1184.0 451.0 A28 28 0 0 0 1210.0 481.0" fill="none" stroke="#222" stroke-width="0.9"/>
<path d="M1222.0 481.0 A28 28 0 0 0 1250.0 451.0" fill="none" stroke="#222" stroke-width="0.9"/>
<path d="M1184.0 757.0 A28 28 0 0 1 1210.0 727.0" fill="none" stroke="#222" stroke-width="0.9"/>
<path d="M1222.0 727.0 A28 28 0 0 1 1250.0 757.0" fill="none" stroke="#222" stroke-width="0.9"/>
<path d="M1210 727 V757 M1222 727 V757" fill="none" stroke="#222" stroke-width="1.3" />
<rect x="1183.5" y="530.5" width="29.5" height="59" fill="none" stroke="#222" stroke-width="1.2"/>
<path d="M1184.5 530.5 V590" fill="none" stroke="#222" stroke-width="2.6" />
<path d="M1184 539.3 H1213" fill="none" stroke="#333" stroke-width="1.0" />
<path d="M1184 548.1 H1213" fill="none" stroke="#333" stroke-width="1.0" />
<path d="M1184 556.9 H1213" fill="none" stroke="#333" stroke-width="1.0" />
<path d="M1184 565.7 H1213" fill="none" stroke="#333" stroke-width="1.0" />
<path d="M1184 574.5 H1213" fill="none" stroke="#333" stroke-width="1.0" />
<path d="M1184 583.3 H1213" fill="none" stroke="#333" stroke-width="1.0" />
<path d="M1199 530.5 V572 M1194.5 567 L1199 573 L1203.5 567" fill="none" stroke="#222" stroke-width="1.0" />
<path d="M1183.5 591 L1213 575" fill="none" stroke="#222" stroke-width="1.0" />
<path d="M1141 538.3 H1171" fill="none" stroke="#222" stroke-width="1.6" stroke-dasharray="4 2.5" />
<path d="M1141 546.9 H1171" fill="none" stroke="#222" stroke-width="1.6" stroke-dasharray="4 2.5" />
<path d="M1141 555.5 H1171" fill="none" stroke="#222" stroke-width="1.6" stroke-dasharray="4 2.5" />
<path d="M1141 564.1 H1171" fill="none" stroke="#222" stroke-width="1.6" stroke-dasharray="4 2.5" />
<path d="M1141 572.7 H1171" fill="none" stroke="#222" stroke-width="1.6" stroke-dasharray="4 2.5" />
<path d="M1141 581.3 H1171" fill="none" stroke="#222" stroke-width="1.6" stroke-dasharray="4 2.5" />
<path d="M1141 589.9 H1171" fill="none" stroke="#222" stroke-width="1.6" stroke-dasharray="4 2.5" />
<path d="M1141 598.5 H1171" fill="none" stroke="#222" stroke-width="1.6" stroke-dasharray="4 2.5" />
<path d="M1171 531 V600 M1183.5 598.5 H1213 M1213 575 V627 M1141 627.5 H1213" fill="none" stroke="#222" stroke-width="1.3" stroke-dasharray="4 2.5" />
<path d="M1140 620 H1420" fill="none" stroke="#444" stroke-width="1.2" stroke-dasharray="9 6" />
<text x="1199" y="527" font-size="9" fill="#222" text-anchor="middle">UP</text>
<text x="1147.8" y="501.2" font-size="13" font-weight="bold" fill="#111" textLength="57.8" lengthAdjust="spacingAndGlyphs" font-family="Liberation Sans" xml:space="preserve">STAIR  251</text>
<path d="M1147.8 502.9 H1205.6" stroke="#111" stroke-width="1.6"/>
<text x="1221.0" y="501.3" font-size="13" font-weight="bold" fill="#111" textLength="92.8" lengthAdjust="spacingAndGlyphs" font-family="Liberation Sans" xml:space="preserve">ELECTRICAL  253</text>
<path d="M1221.0 503.0 H1313.8" stroke="#111" stroke-width="1.6"/>
<rect x="1226" y="521" width="17" height="32" fill="none" stroke="#444" stroke-width="0.9" stroke-dasharray="3 2"/>
<rect x="1226" y="549" width="17" height="4" fill="#555"/>
<rect x="1250" y="521" width="17" height="32" fill="none" stroke="#444" stroke-width="0.9" stroke-dasharray="3 2"/>
<rect x="1250" y="549" width="17" height="4" fill="#555"/>
<rect x="1274" y="521" width="17" height="32" fill="none" stroke="#444" stroke-width="0.9" stroke-dasharray="3 2"/>
<rect x="1274" y="549" width="17" height="4" fill="#555"/>
<rect x="1298" y="521" width="17" height="32" fill="none" stroke="#444" stroke-width="0.9" stroke-dasharray="3 2"/>
<rect x="1298" y="549" width="17" height="4" fill="#555"/>
<text x="1255.0" y="575.8" font-size="13" font-weight="bold" fill="#111" textLength="85.8" lengthAdjust="spacingAndGlyphs" font-family="Liberation Sans" xml:space="preserve">STORAGE  253A</text>
<path d="M1255.0 577.5 H1340.8" stroke="#111" stroke-width="1.6"/>
<text x="1238.0" y="613.3" font-size="13" font-weight="bold" fill="#111" textLength="85.3" lengthAdjust="spacingAndGlyphs" font-family="Liberation Sans" xml:space="preserve">STORAGE  254A</text>
<path d="M1238.0 615.0 H1323.3" stroke="#111" stroke-width="1.6"/>
<path d="M1280 616 L1256 662" fill="none" stroke="#222" stroke-width="1" />
<circle cx="1256" cy="665" r="2.5" fill="#111"/>
<path d="M1387 458 L1406 622 M1406 458 L1387 622" fill="none" stroke="#222" stroke-width="0.8" />
<rect x="1389" y="532" width="6" height="6" fill="none" stroke="#333" stroke-width="0.8"/>
<path d="M1322.0 456.0 A26 26 0 0 1 1346.0 480.0" fill="none" stroke="#222" stroke-width="0.9"/>
<path d="M1322 456 H1347" fill="none" stroke="#222" stroke-width="1.2" />
<rect x="1435" y="482" width="57" height="76" fill="none" stroke="#3a5a2a" stroke-width="1"/><path d="M1435 482 L1492 558 M1492 482 L1435 558" stroke="#3a5a2a" stroke-width="0.8"/>
<rect x="1435" y="566" width="57" height="77" fill="none" stroke="#3a5a2a" stroke-width="1"/><path d="M1435 566 L1492 643 M1492 566 L1435 643" stroke="#3a5a2a" stroke-width="0.8"/>
<path d="M1500 571 H1517" fill="none" stroke="#e02020" stroke-width="1.2" />
<rect x="1440" y="685" width="48" height="43" fill="none" stroke="#222" stroke-width="1"/><path d="M1440 685 L1488 728 M1488 685 L1440 728" stroke="#222" stroke-width="0.8"/>
<rect x="1465" y="656" width="23" height="25" fill="none" stroke="#222" stroke-width="1"/><path d="M1465 681 L1488 656" stroke="#222" stroke-width="0.8"/>
<path d="M1280 630 V697 H1252" fill="none" stroke="#1a1a1a" stroke-width="4" />
<path d="M1280 630 V697 H1252" fill="none" stroke="url(#hatch)" stroke-width="2.4" />
<path d="M1286 633 V680 M1312 633 V680 M1342 633 V680 M1372 630 V757" fill="none" stroke="#1a1a1a" stroke-width="3.5" />
<path d="M1286 633 V680 M1312 633 V680 M1342 633 V680 M1372 630 V757" fill="none" stroke="url(#hatch)" stroke-width="1.9" />
<path d="M1280 733 V757" fill="none" stroke="#1a1a1a" stroke-width="3.5" />
<path d="M1280 733 V757" fill="none" stroke="url(#hatch)" stroke-width="1.9" />
<path d="M1222 697 V727 M1225 697 V727" fill="none" stroke="#222" stroke-width="1" />
<path d="M1252.0 697.0 A28 28 0 0 1 1225.0 727.0" fill="none" stroke="#222" stroke-width="0.9"/>
<circle cx="1294" cy="649" r="5" fill="none" stroke="#222" stroke-width="1.2"/><circle cx="1294" cy="649" r="2" fill="none" stroke="#222" stroke-width="0.8"/>
<circle cx="1324" cy="649" r="5" fill="none" stroke="#222" stroke-width="1.2"/><circle cx="1324" cy="649" r="2" fill="none" stroke="#222" stroke-width="0.8"/>
<circle cx="1354" cy="649" r="5" fill="none" stroke="#222" stroke-width="1.2"/><circle cx="1354" cy="649" r="2" fill="none" stroke="#222" stroke-width="0.8"/>
<circle cx="1405" cy="649" r="5" fill="none" stroke="#222" stroke-width="1.2"/><circle cx="1405" cy="649" r="2" fill="none" stroke="#222" stroke-width="0.8"/>
<rect x="1293" y="737" width="20" height="12" fill="none" stroke="#222" stroke-width="1.4"/>
<rect x="1335" y="737" width="20" height="12" fill="none" stroke="#222" stroke-width="1.4"/>
<path d="M1280 734 H1372" fill="none" stroke="#222" stroke-width="1.2" />
<rect x="1219" y="633" width="19" height="19" fill="none" stroke="#333" stroke-width="0.9"/>
<text x="1272.4" y="717.5" font-size="13" font-weight="bold" fill="#111" textLength="96.9" lengthAdjust="spacingAndGlyphs" font-family="Liberation Sans" xml:space="preserve">WOMEN'S  RR  254</text>
<path d="M1272.4 719.2 H1369.3" stroke="#111" stroke-width="1.6"/>
<text x="0" y="0" font-size="13" font-weight="bold" fill="#111" textLength="105" lengthAdjust="spacingAndGlyphs" transform="translate(1180 744) rotate(-90)" xml:space="preserve">MOTHER'S RM.  252</text>
<path d="M1183 744 V639" fill="none" stroke="#222" stroke-width="1.6" />
<rect x="1140" y="700" width="20" height="20" fill="none" stroke="#333" stroke-width="0.9" stroke-dasharray="3 2"/>
<rect x="1143" y="720" width="14" height="16" fill="none" stroke="#222" stroke-width="1.3"/>
<circle cx="1197.5" cy="451.4" r="9.4" fill="none" stroke="#222" stroke-width="0.9"/>
<text x="1197.5" y="454.4" font-size="8.5" fill="#333" text-anchor="middle" textLength="13.6" lengthAdjust="spacingAndGlyphs">251</text>
<circle cx="1235.0" cy="451.4" r="9.4" fill="none" stroke="#222" stroke-width="0.9"/>
<text x="1235.0" y="454.4" font-size="8.5" fill="#333" text-anchor="middle" textLength="13.6" lengthAdjust="spacingAndGlyphs">253</text>
<circle cx="1323.0" cy="471.0" r="9.4" fill="none" stroke="#222" stroke-width="0.9"/>
<text x="1323.0" y="474.0" font-size="7.5" fill="#333" text-anchor="middle" textLength="13.6" lengthAdjust="spacingAndGlyphs">253A</text>
<circle cx="1235.0" cy="696.8" r="9.4" fill="none" stroke="#222" stroke-width="0.9"/>
<text x="1235.0" y="699.8" font-size="7.5" fill="#333" text-anchor="middle" textLength="13.6" lengthAdjust="spacingAndGlyphs">254A</text>
<circle cx="1380.7" cy="713.7" r="9.4" fill="none" stroke="#222" stroke-width="0.9"/>
<text x="1380.7" y="716.7" font-size="7.5" fill="#333" text-anchor="middle" textLength="13.6" lengthAdjust="spacingAndGlyphs">254B</text>
<circle cx="1197.5" cy="758.0" r="9.4" fill="none" stroke="#222" stroke-width="0.9"/>
<text x="1197.5" y="761.0" font-size="8.5" fill="#333" text-anchor="middle" textLength="13.6" lengthAdjust="spacingAndGlyphs">252</text>
<circle cx="1235.0" cy="758.0" r="9.4" fill="none" stroke="#222" stroke-width="0.9"/>
<text x="1235.0" y="761.0" font-size="8.5" fill="#333" text-anchor="middle" textLength="13.6" lengthAdjust="spacingAndGlyphs">254</text>
<path d="M1435 780 L1443 804 H1458" fill="none" stroke="#222" stroke-width="1" />
<circle cx="1477" cy="805" r="18.5" fill="#fff" stroke="#222" stroke-width="1"/><path d="M1459 805 H1495" stroke="#222" stroke-width="0.9"/>
<text x="1477" y="801" font-size="10" fill="#222" text-anchor="middle">1</text><text x="1477" y="816" font-size="10" fill="#222" text-anchor="middle">A6.02</text>
<text x="1520.9" y="598.5" font-size="13" font-weight="bold" fill="#111" textLength="63.5" lengthAdjust="spacingAndGlyphs" font-family="Liberation Sans" xml:space="preserve">LOBBY  256</text>
<path d="M1520.9 600.2 H1584.4" stroke="#111" stroke-width="1.6"/>
<path d="M1612 451 H1860 M1885 451 H1897 M1922 451 H1929" fill="none" stroke="#1a1a1a" stroke-width="5" />
<path d="M1612 451 H1860 M1885 451 H1897 M1922 451 H1929" fill="none" stroke="url(#hatch)" stroke-width="3.4" />
<path d="M1848 451 V440 Q1848 430 1830 431 L1640 447 Q1609 450 1609 480 V735 Q1609 765 1638 766 L1830 778.5 Q1848 780 1848 762 V757" fill="none" stroke="#1a1a1a" stroke-width="5" />
<path d="M1848 451 V440 Q1848 430 1830 431 L1640 447 Q1609 450 1609 480 V735 Q1609 765 1638 766 L1830 778.5 Q1848 780 1848 762 V757" fill="none" stroke="url(#hatch)" stroke-width="3.4" />
<path d="M1848 431 L1929 425" fill="none" stroke="#222" stroke-width="1" stroke-dasharray="5 4" />
<path d="M1848 782 L1929 788" fill="none" stroke="#222" stroke-width="1" stroke-dasharray="5 4" />
<path d="M1612 733 H1738 M1738 727 V757 H1857 M1886 757 H1898 M1925 757 H1929" fill="none" stroke="#1a1a1a" stroke-width="5" />
<path d="M1612 733 H1738 M1738 727 V757 H1857 M1886 757 H1898 M1925 757 H1929" fill="none" stroke="url(#hatch)" stroke-width="3.4" />
<path d="M1737.5 629 V698" fill="none" stroke="#1a1a1a" stroke-width="4" />
<path d="M1737.5 629 V698" fill="none" stroke="url(#hatch)" stroke-width="2.4" />
<path d="M1707 727 H1737 M1707 724 H1737" fill="none" stroke="#222" stroke-width="1.1" />
<path d="M1707.0 724.0 A30 30 0 0 1 1737.0 696.0" fill="none" stroke="#222" stroke-width="0.9"/>
<path d="M1737 734 H1827" fill="none" stroke="#222" stroke-width="1" />
<path d="M1827 734 V757" fill="none" stroke="#1a1a1a" stroke-width="3.5" />
<path d="M1827 734 V757" fill="none" stroke="url(#hatch)" stroke-width="1.9" />
<path d="M1685.6 451 V733" fill="none" stroke="#1a1a1a" stroke-width="4.5" />
<path d="M1685.6 451 V733" fill="none" stroke="url(#hatch)" stroke-width="2.9" />
<path d="M1685.6 629 H1893" fill="none" stroke="#1a1a1a" stroke-width="4" />
<path d="M1685.6 629 H1893" fill="none" stroke="url(#hatch)" stroke-width="2.4" />
<path d="M1612 654 H1685" fill="none" stroke="#1a1a1a" stroke-width="4" />
<path d="M1612 654 H1685" fill="none" stroke="url(#hatch)" stroke-width="2.4" />
<path d="M1893 451 V757" fill="none" stroke="#1a1a1a" stroke-width="4.5" />
<path d="M1893 451 V757" fill="none" stroke="url(#hatch)" stroke-width="2.9" />
<path d="M1893 578 H1929" fill="none" stroke="#1a1a1a" stroke-width="4" />
<path d="M1893 578 H1929" fill="none" stroke="url(#hatch)" stroke-width="2.4" />
<rect x="1615" y="566.4" width="58.3" height="75.6" fill="none" stroke="#222" stroke-width="1"/><path d="M1615 566.4 L1673.3 642 M1673.3 566.4 L1615 642" stroke="#222" stroke-width="0.8"/>
<rect x="1619.6" y="685.5" width="48.4" height="40.5" fill="none" stroke="#222" stroke-width="1"/><path d="M1619.6 726 L1668 685.5" stroke="#222" stroke-width="0.8"/>
<rect x="1705.5" y="488" width="44" height="107" fill="none" stroke="#444" stroke-width="0.9" stroke-dasharray="4 3"/>
<path d="M1718.2 488 V595 M1737.1 488 V595" fill="none" stroke="#222" stroke-width="1" />
<path d="M1705.5 523 H1749.5 M1705.5 559 H1749.5" fill="none" stroke="#444" stroke-width="0.9" stroke-dasharray="4 3" />
<rect x="1762" y="488" width="44" height="107" fill="none" stroke="#444" stroke-width="0.9" stroke-dasharray="4 3"/>
<path d="M1774.7 488 V595 M1793.6 488 V595" fill="none" stroke="#222" stroke-width="1" />
<path d="M1762 523 H1806 M1762 559 H1806" fill="none" stroke="#444" stroke-width="0.9" stroke-dasharray="4 3" />
<rect x="1819" y="488" width="44" height="107" fill="none" stroke="#444" stroke-width="0.9" stroke-dasharray="4 3"/>
<path d="M1831.7 488 V595 M1850.6 488 V595" fill="none" stroke="#222" stroke-width="1" />
<path d="M1819 523 H1863 M1819 559 H1863" fill="none" stroke="#444" stroke-width="0.9" stroke-dasharray="4 3" />
<path d="M1854 541.5 H1871" fill="none" stroke="#e02020" stroke-width="1" />
<text x="1753.0" y="471.2" font-size="13" font-weight="bold" fill="#111" textLength="70.6" lengthAdjust="spacingAndGlyphs" font-family="Liberation Sans" xml:space="preserve">SERVER  257</text>
<path d="M1753.0 472.9 H1823.6" stroke="#111" stroke-width="1.6"/>
<text x="1786.8" y="621.8" font-size="13" font-weight="bold" fill="#111" textLength="85.9" lengthAdjust="spacingAndGlyphs" font-family="Liberation Sans" xml:space="preserve">STORAGE  258A</text>
<path d="M1786.8 623.5 H1872.7" stroke="#111" stroke-width="1.6"/>
<path d="M1830 623 L1856 663" fill="none" stroke="#222" stroke-width="1" />
<circle cx="1856" cy="663" r="2.5" fill="#111"/>
<rect x="1869" y="636" width="19" height="19" fill="none" stroke="#222" stroke-width="0.9"/>
<text x="1754.6" y="719.8" font-size="13" font-weight="bold" fill="#111" textLength="78.2" lengthAdjust="spacingAndGlyphs" font-family="Liberation Sans" xml:space="preserve">MEN'S  RR  258</text>
<path d="M1754.6 721.5 H1832.8" stroke="#111" stroke-width="1.6"/>
<text x="1901.8" y="719.8" font-size="13" font-weight="bold" fill="#111" textLength="38.2" lengthAdjust="spacingAndGlyphs" font-family="Liberation Sans" xml:space="preserve">STAIR</text>
<path d="M1901.8 721.5 H1940.0" stroke="#111" stroke-width="1.6"/>
<path d="M1768 629 V690" fill="none" stroke="#1a1a1a" stroke-width="3.5" />
<path d="M1768 629 V690" fill="none" stroke="url(#hatch)" stroke-width="1.9" />
<path d="M1827 629 V697 H1857" fill="none" stroke="#1a1a1a" stroke-width="3.5" />
<path d="M1827 629 V697 H1857" fill="none" stroke="url(#hatch)" stroke-width="1.9" />
<path d="M1886 697 V727 M1889 697 V727" fill="none" stroke="#222" stroke-width="1.1" />
<path d="M1857.0 697.0 A29 29 0 0 0 1886.0 727.0" fill="none" stroke="#222" stroke-width="0.9"/>
<circle cx="1701" cy="649" r="5" fill="none" stroke="#222" stroke-width="1.2"/><circle cx="1701" cy="649" r="2" fill="none" stroke="#222" stroke-width="0.8"/>
<circle cx="1752" cy="649" r="5" fill="none" stroke="#222" stroke-width="1.2"/><circle cx="1752" cy="649" r="2" fill="none" stroke="#222" stroke-width="0.8"/>
<rect x="1750" y="737" width="20" height="12" fill="none" stroke="#222" stroke-width="1.4"/>
<rect x="1793" y="737" width="20" height="12" fill="none" stroke="#222" stroke-width="1.4"/>
<rect x="1770" y="640" width="26" height="30" fill="none" stroke="#333" stroke-width="0.9" stroke-dasharray="3 2"/><rect x="1800" y="640" width="24" height="30" fill="none" stroke="#333" stroke-width="0.9" stroke-dasharray="3 2"/>
<path d="M1898 600 H1929" fill="none" stroke="#222" stroke-width="1.2" stroke-dasharray="4 2" />
<path d="M1898 613 H1929" fill="none" stroke="#222" stroke-width="1.2" stroke-dasharray="4 2" />
<path d="M1898 626 H1929" fill="none" stroke="#222" stroke-width="1.2" stroke-dasharray="4 2" />
<path d="M1898 639 H1929" fill="none" stroke="#222" stroke-width="1.2" stroke-dasharray="4 2" />
<path d="M1898 652 H1929" fill="none" stroke="#222" stroke-width="1.2" stroke-dasharray="4 2" />
<path d="M1898 665 H1929" fill="none" stroke="#222" stroke-width="1.2" stroke-dasharray="4 2" />
<text x="0" y="0" font-size="12" font-weight="bold" fill="#111" transform="translate(1934 560) rotate(-90)">STORAGE  260</text>
<path d="M1860.0 451.0 A26 26 0 0 0 1885.0 478.0" fill="none" stroke="#222" stroke-width="0.9"/>
<path d="M1885 451 V480" fill="none" stroke="#222" stroke-width="1.3" />
<path d="M1857.0 757.0 A29 29 0 0 1 1886.0 728.0" fill="none" stroke="#222" stroke-width="0.9"/>
<path d="M1886 728 V757" fill="none" stroke="#222" stroke-width="1.3" />
<path d="M1898.0 728.0 A29 29 0 0 1 1927.0 757.0" fill="none" stroke="#222" stroke-width="0.9"/>
<path d="M1922.0 480.0 A26 26 0 0 1 1897.0 451.0" fill="none" stroke="#222" stroke-width="0.9"/>
<circle cx="1871.0" cy="451.4" r="9.4" fill="none" stroke="#222" stroke-width="0.9"/>
<text x="1871.0" y="454.4" font-size="8.5" fill="#333" text-anchor="middle" textLength="13.6" lengthAdjust="spacingAndGlyphs">257</text>
<circle cx="1910.0" cy="451.4" r="9.4" fill="none" stroke="#222" stroke-width="0.9"/>
<text x="1910.0" y="454.4" font-size="8.5" fill="#333" text-anchor="middle" textLength="13.6" lengthAdjust="spacingAndGlyphs">260</text>
<circle cx="1871.0" cy="697.7" r="9.4" fill="none" stroke="#222" stroke-width="0.9"/>
<text x="1871.0" y="700.7" font-size="7.5" fill="#333" text-anchor="middle" textLength="13.6" lengthAdjust="spacingAndGlyphs">258A</text>
<circle cx="1727.0" cy="713.7" r="9.4" fill="none" stroke="#222" stroke-width="0.9"/>
<text x="1727.0" y="716.7" font-size="7.5" fill="#333" text-anchor="middle" textLength="13.6" lengthAdjust="spacingAndGlyphs">258B</text>
<circle cx="1871.0" cy="758.0" r="9.4" fill="none" stroke="#222" stroke-width="0.9"/>
<text x="1871.0" y="761.0" font-size="8.5" fill="#333" text-anchor="middle" textLength="13.6" lengthAdjust="spacingAndGlyphs">258</text>
<circle cx="1910.0" cy="758.0" r="9.4" fill="none" stroke="#222" stroke-width="0.9"/>
<text x="1910.0" y="761.0" font-size="8.5" fill="#333" text-anchor="middle" textLength="13.6" lengthAdjust="spacingAndGlyphs">259</text>
<path d="M775 836 L1411 883" fill="none" stroke="#222" stroke-width="1" stroke-dasharray="5 4" />
<path d="M1752 874 L1929 861" fill="none" stroke="#222" stroke-width="1" stroke-dasharray="5 4" />
<path d="M600 825 L775 836 Q794.7 838 794.7 853 V903.6 M794.7 968.8 V1054" fill="none" stroke="#1a1a1a" stroke-width="5" />
<path d="M600 825 L775 836 Q794.7 838 794.7 853 V903.6 M794.7 968.8 V1054" fill="none" stroke="url(#hatch)" stroke-width="3.4" />
<path d="M600 936 H794.7" fill="none" stroke="#1a1a1a" stroke-width="5.5" />
<path d="M600 936 H794.7" fill="none" stroke="url(#hatch)" stroke-width="3.9" />
<path d="M764 929.5 H792 M764 942.5 H792" fill="none" stroke="#333" stroke-width="2.4" />
<path d="M792.0 903.6 A28 28 0 0 0 764.0 930.0" fill="none" stroke="#222" stroke-width="0.9"/>
<path d="M764.0 942.0 A28 28 0 0 0 792.0 968.8" fill="none" stroke="#222" stroke-width="0.9"/>
<circle cx="794.0" cy="916.6" r="9.4" fill="none" stroke="#222" stroke-width="0.9"/>
<text x="794.0" y="919.6" font-size="8.5" fill="#333" text-anchor="middle" textLength="13.6" lengthAdjust="spacingAndGlyphs">242</text>
<circle cx="794.0" cy="955.0" r="9.4" fill="none" stroke="#222" stroke-width="0.9"/>
<text x="794.0" y="958.0" font-size="8.5" fill="#333" text-anchor="middle" textLength="13.6" lengthAdjust="spacingAndGlyphs">243</text>
<text x="650.0" y="887.8" font-size="13" font-weight="bold" fill="#111" textLength="78.4" lengthAdjust="spacingAndGlyphs" font-family="Liberation Sans" xml:space="preserve">MEETING  242</text>
<path d="M650.0 889.5 H728.4" stroke="#111" stroke-width="1.6"/>
<text x="650.0" y="996.4" font-size="13" font-weight="bold" fill="#111" textLength="78.4" lengthAdjust="spacingAndGlyphs" font-family="Liberation Sans" xml:space="preserve">MEETING  243</text>
<path d="M650.0 998.1 H728.4" stroke="#111" stroke-width="1.6"/>
<path d="M889 920.7 V869 Q889 847 911 847 L1057.6 858 Q1079.6 858 1079.6 880 V920.7" fill="none" stroke="#1a1a1a" stroke-width="4.5" />
<path d="M889 920.7 V869 Q889 847 911 847 L1057.6 858 Q1079.6 858 1079.6 880 V920.7" fill="none" stroke="url(#hatch)" stroke-width="2.9" />
<path d="M889 987.7 V1054" fill="none" stroke="#1a1a1a" stroke-width="4.5" />
<path d="M889 987.7 V1054" fill="none" stroke="url(#hatch)" stroke-width="2.9" />
<path d="M1079.6 987.7 V1054" fill="none" stroke="#1a1a1a" stroke-width="4.5" />
<path d="M1079.6 987.7 V1054" fill="none" stroke="url(#hatch)" stroke-width="2.9" />
<path d="M984.2 854.5 V1054" fill="none" stroke="#1a1a1a" stroke-width="4.5" />
<path d="M984.2 854.5 V1054" fill="none" stroke="url(#hatch)" stroke-width="2.9" />
<path d="M889 955 H1079.6" fill="none" stroke="#1a1a1a" stroke-width="5.5" />
<path d="M889 955 H1079.6" fill="none" stroke="url(#hatch)" stroke-width="3.9" />
<path d="M891 948.5 H919 M891 961.5 H919" fill="none" stroke="#333" stroke-width="2.4" />
<path d="M891.0 920.7 A28 28 0 0 1 919.0 949.0" fill="none" stroke="#222" stroke-width="0.9"/>
<path d="M919.0 961.0 A28 28 0 0 1 891.0 987.7" fill="none" stroke="#222" stroke-width="0.9"/>
<path d="M1049.6 948.5 H1077.6 M1049.6 961.5 H1077.6" fill="none" stroke="#333" stroke-width="2.4" />
<path d="M1049.6 949.0 A28 28 0 0 1 1077.6 920.7" fill="none" stroke="#222" stroke-width="0.9"/>
<path d="M1077.6 987.7 A28 28 0 0 1 1049.6 961.0" fill="none" stroke="#222" stroke-width="0.9"/>
<circle cx="889.0" cy="935.5" r="9.4" fill="none" stroke="#222" stroke-width="0.9"/>
<text x="889.0" y="938.5" font-size="8.5" fill="#333" text-anchor="middle" textLength="13.6" lengthAdjust="spacingAndGlyphs">240</text>
<circle cx="889.0" cy="974.3" r="9.4" fill="none" stroke="#222" stroke-width="0.9"/>
<text x="889.0" y="977.3" font-size="8.5" fill="#333" text-anchor="middle" textLength="13.6" lengthAdjust="spacingAndGlyphs">241</text>
<circle cx="1079.0" cy="935.5" r="9.4" fill="none" stroke="#222" stroke-width="0.9"/>
<text x="1079.0" y="938.5" font-size="8.5" fill="#333" text-anchor="middle" textLength="13.6" lengthAdjust="spacingAndGlyphs">238</text>
<circle cx="1079.0" cy="974.3" r="9.4" fill="none" stroke="#222" stroke-width="0.9"/>
<text x="1079.0" y="977.3" font-size="8.5" fill="#333" text-anchor="middle" textLength="13.6" lengthAdjust="spacingAndGlyphs">239</text>
<text x="901.0" y="902.7" font-size="13" font-weight="bold" fill="#111" textLength="66.4" lengthAdjust="spacingAndGlyphs" font-family="Liberation Sans" xml:space="preserve">OFFICE  240</text>
<path d="M901.0 904.4 H967.4" stroke="#111" stroke-width="1.6"/>
<text x="1000.7" y="903.8" font-size="13" font-weight="bold" fill="#111" textLength="66.3" lengthAdjust="spacingAndGlyphs" font-family="Liberation Sans" xml:space="preserve">OFFICE  238</text>
<path d="M1000.7 905.5 H1067.0" stroke="#111" stroke-width="1.6"/>
<text x="901.0" y="1006.3" font-size="13" font-weight="bold" fill="#111" textLength="66.4" lengthAdjust="spacingAndGlyphs" font-family="Liberation Sans" xml:space="preserve">OFFICE  241</text>
<path d="M901.0 1008.0 H967.4" stroke="#111" stroke-width="1.6"/>
<text x="998.0" y="1006.3" font-size="13" font-weight="bold" fill="#111" textLength="65.5" lengthAdjust="spacingAndGlyphs" font-family="Liberation Sans" xml:space="preserve">OFFICE  239</text>
<path d="M998.0 1008.0 H1063.5" stroke="#111" stroke-width="1.6"/>
<path d="M1174 920.7 V889.5 Q1174 867.5 1196 867.5 L1342.6 879.6 Q1364.6 879.6 1364.6 901.6 V920.7" fill="none" stroke="#1a1a1a" stroke-width="4.5" />
<path d="M1174 920.7 V889.5 Q1174 867.5 1196 867.5 L1342.6 879.6 Q1364.6 879.6 1364.6 901.6 V920.7" fill="none" stroke="url(#hatch)" stroke-width="2.9" />
<path d="M1174 987.7 V1054" fill="none" stroke="#1a1a1a" stroke-width="4.5" />
<path d="M1174 987.7 V1054" fill="none" stroke="url(#hatch)" stroke-width="2.9" />
<path d="M1364.6 987.7 V1054" fill="none" stroke="#1a1a1a" stroke-width="4.5" />
<path d="M1364.6 987.7 V1054" fill="none" stroke="url(#hatch)" stroke-width="2.9" />
<path d="M1269.5 875.55 V1054" fill="none" stroke="#1a1a1a" stroke-width="4.5" />
<path d="M1269.5 875.55 V1054" fill="none" stroke="url(#hatch)" stroke-width="2.9" />
<path d="M1174 955 H1364.6" fill="none" stroke="#1a1a1a" stroke-width="5.5" />
<path d="M1174 955 H1364.6" fill="none" stroke="url(#hatch)" stroke-width="3.9" />
<path d="M1176 948.5 H1204 M1176 961.5 H1204" fill="none" stroke="#333" stroke-width="2.4" />
<path d="M1176.0 920.7 A28 28 0 0 1 1204.0 949.0" fill="none" stroke="#222" stroke-width="0.9"/>
<path d="M1204.0 961.0 A28 28 0 0 1 1176.0 987.7" fill="none" stroke="#222" stroke-width="0.9"/>
<path d="M1334.6 948.5 H1362.6 M1334.6 961.5 H1362.6" fill="none" stroke="#333" stroke-width="2.4" />
<path d="M1334.6 949.0 A28 28 0 0 1 1362.6 920.7" fill="none" stroke="#222" stroke-width="0.9"/>
<path d="M1362.6 987.7 A28 28 0 0 1 1334.6 961.0" fill="none" stroke="#222" stroke-width="0.9"/>
<path d="M1357 900 V1054" fill="none" stroke="#222" stroke-width="1" stroke-dasharray="6 3" />
<circle cx="1174.0" cy="935.5" r="9.4" fill="none" stroke="#222" stroke-width="0.9"/>
<text x="1174.0" y="938.5" font-size="8.5" fill="#333" text-anchor="middle" textLength="13.6" lengthAdjust="spacingAndGlyphs">236</text>
<circle cx="1174.0" cy="974.3" r="9.4" fill="none" stroke="#222" stroke-width="0.9"/>
<text x="1174.0" y="977.3" font-size="8.5" fill="#333" text-anchor="middle" textLength="13.6" lengthAdjust="spacingAndGlyphs">237</text>
<circle cx="1371.4" cy="935.5" r="9.4" fill="none" stroke="#222" stroke-width="0.9"/>
<text x="1371.4" y="938.5" font-size="8.5" fill="#333" text-anchor="middle" textLength="13.6" lengthAdjust="spacingAndGlyphs">234</text>
<circle cx="1371.4" cy="974.3" r="9.4" fill="none" stroke="#222" stroke-width="0.9"/>
<text x="1371.4" y="977.3" font-size="8.5" fill="#333" text-anchor="middle" textLength="13.6" lengthAdjust="spacingAndGlyphs">235</text>
<text x="1187.0" y="918.1" font-size="13" font-weight="bold" fill="#111" textLength="66.0" lengthAdjust="spacingAndGlyphs" font-family="Liberation Sans" xml:space="preserve">OFFICE  236</text>
<path d="M1187.0 919.8 H1253.0" stroke="#111" stroke-width="1.6"/>
<text x="1277.0" y="918.1" font-size="13" font-weight="bold" fill="#111" textLength="74.9" lengthAdjust="spacingAndGlyphs" font-family="Liberation Sans" xml:space="preserve">MEETING  234</text>
<path d="M1277.0 919.8 H1351.9" stroke="#111" stroke-width="1.6"/>
<text x="1187.0" y="1014.2" font-size="13" font-weight="bold" fill="#111" textLength="66.0" lengthAdjust="spacingAndGlyphs" font-family="Liberation Sans" xml:space="preserve">OFFICE  237</text>
<path d="M1187.0 1015.9 H1253.0" stroke="#111" stroke-width="1.6"/>
<text x="1277.0" y="1014.2" font-size="13" font-weight="bold" fill="#111" textLength="74.9" lengthAdjust="spacingAndGlyphs" font-family="Liberation Sans" xml:space="preserve">MEETING  235</text>
<path d="M1277.0 1015.9 H1351.9" stroke="#111" stroke-width="1.6"/>
<rect x="1358.9" y="864.3" width="393" height="211.3" rx="9" fill="none" stroke="#333" stroke-width="1.1" stroke-dasharray="6 4"/>
<path d="M1411 883 L1554 897 L1697 883" fill="none" stroke="#1a1a1a" stroke-width="5" />
<path d="M1411 883 L1554 897 L1697 883" fill="none" stroke="url(#hatch)" stroke-width="3.4" />
<path d="M1411 883 V926 M1697 883 V926 M1411 926 H1697" fill="none" stroke="#1a1a1a" stroke-width="4" />
<path d="M1411 883 V926 M1697 883 V926 M1411 926 H1697" fill="none" stroke="url(#hatch)" stroke-width="2.4" />
<path d="M1411 905 H1460 V926 M1697 905 H1648 V926" fill="none" stroke="#1a1a1a" stroke-width="4" />
<path d="M1411 905 H1460 V926 M1697 905 H1648 V926" fill="none" stroke="url(#hatch)" stroke-width="2.4" />
<path d="M1416 908 H1456 V924 H1416 Z M1652 908 H1692 V924 H1652 Z" fill="none" stroke="#222" stroke-width="1.1" />
<rect x="1482" y="907" width="144" height="10" fill="none" stroke="#333" stroke-width="0.9" stroke-dasharray="3 2"/>
<rect x="1542" y="911" width="25" height="13" rx="2" fill="#fff" stroke="#222" stroke-width="1"/>
<path d="M1554 905 V916" fill="none" stroke="#222" stroke-width="1.5" />
<rect x="1467.4" y="939.7" width="173.6" height="56.7" fill="none" stroke="#333" stroke-width="1" stroke-dasharray="4 3"/>
<rect x="1467.4" y="953" width="173.6" height="29" fill="none" stroke="#222" stroke-width="1.1"/>
<text x="1516.0" y="972.6" font-size="13" font-weight="bold" fill="#111" textLength="64.6" lengthAdjust="spacingAndGlyphs" font-family="Liberation Sans" xml:space="preserve">BREAK  233</text>
<path d="M1516.0 974.3 H1580.6" stroke="#111" stroke-width="1.6"/>
<rect x="1398" y="1019" width="311.5" height="26" fill="none" stroke="#222" stroke-width="1.1"/>
<path d="M1400 1021 H1422 V1043 H1400 Z M1685 1021 H1707 V1043 H1685 Z" fill="none" stroke="#1a1a1a" stroke-width="4" />
<path d="M1400 1021 H1422 V1043 H1400 Z M1685 1021 H1707 V1043 H1685 Z" fill="none" stroke="url(#hatch)" stroke-width="2.4" />
<path d="M1406 1027 H1416 M1406 1037 H1416 M1411 1027 V1037 M1691 1027 H1701 M1691 1037 H1701 M1696 1027 V1037" fill="none" stroke="#222" stroke-width="1.3" />
<path d="M1365 880 L1411 883 M1697 883 L1744 878" fill="none" stroke="#222" stroke-width="1" stroke-dasharray="4 3" />
<path d="M1749 1076 L1768 1098" fill="none" stroke="#222" stroke-width="1" />
<circle cx="1780" cy="1111.8" r="19" fill="#fff" stroke="#222" stroke-width="1"/><path d="M1761 1111.8 H1799" stroke="#222" stroke-width="0.9"/>
<text x="1780" y="1108" font-size="10" fill="#222" text-anchor="middle">01</text><text x="1780" y="1123" font-size="10" fill="#222" text-anchor="middle">A6.01</text>
<path d="M1744 920.7 V900 Q1744 877.5 1766 877.5 L1929 866" fill="none" stroke="#1a1a1a" stroke-width="4.5" />
<path d="M1744 920.7 V900 Q1744 877.5 1766 877.5 L1929 866" fill="none" stroke="url(#hatch)" stroke-width="2.9" />
<path d="M1744 987.7 V1054" fill="none" stroke="#1a1a1a" stroke-width="4.5" />
<path d="M1744 987.7 V1054" fill="none" stroke="url(#hatch)" stroke-width="2.9" />
<path d="M1839.4 874 V1054" fill="none" stroke="#1a1a1a" stroke-width="4.5" />
<path d="M1839.4 874 V1054" fill="none" stroke="url(#hatch)" stroke-width="2.9" />
<path d="M1744 954.5 H1929" fill="none" stroke="#1a1a1a" stroke-width="5.5" />
<path d="M1744 954.5 H1929" fill="none" stroke="url(#hatch)" stroke-width="3.9" />
<path d="M1746 948 H1774 M1746 961 H1774" fill="none" stroke="#333" stroke-width="2.4" />
<path d="M1746.0 920.7 A28 28 0 0 1 1774.0 948.5" fill="none" stroke="#222" stroke-width="0.9"/>
<path d="M1774.0 960.5 A28 28 0 0 1 1746.0 987.7" fill="none" stroke="#222" stroke-width="0.9"/>
<path d="M1929.0 920.0 A28 28 0 0 0 1900.0 948.5" fill="none" stroke="#222" stroke-width="0.9"/>
<path d="M1900.0 960.5 A28 28 0 0 0 1929.0 987.7" fill="none" stroke="#222" stroke-width="0.9"/>
<path d="M1752 890 V1054" fill="none" stroke="#222" stroke-width="1" stroke-dasharray="6 3" />
<circle cx="1735.3" cy="935.7" r="9.4" fill="none" stroke="#222" stroke-width="0.9"/>
<text x="1735.3" y="938.7" font-size="8.5" fill="#333" text-anchor="middle" textLength="13.6" lengthAdjust="spacingAndGlyphs">231</text>
<circle cx="1735.3" cy="974.0" r="9.4" fill="none" stroke="#222" stroke-width="0.9"/>
<text x="1735.3" y="977.0" font-size="8.5" fill="#333" text-anchor="middle" textLength="13.6" lengthAdjust="spacingAndGlyphs">232</text>
<circle cx="1929.0" cy="935.7" r="9.4" fill="none" stroke="#222" stroke-width="0.9"/>
<text x="1929.0" y="938.7" font-size="8.5" fill="#333" text-anchor="middle" textLength="13.6" lengthAdjust="spacingAndGlyphs">229</text>
<circle cx="1929.0" cy="974.0" r="9.4" fill="none" stroke="#222" stroke-width="0.9"/>
<text x="1929.0" y="977.0" font-size="8.5" fill="#333" text-anchor="middle" textLength="13.6" lengthAdjust="spacingAndGlyphs">230</text>
<text x="1756.7" y="919.2" font-size="13" font-weight="bold" fill="#111" textLength="75.3" lengthAdjust="spacingAndGlyphs" font-family="Liberation Sans" xml:space="preserve">MEETING  231</text>
<path d="M1756.7 920.9 H1832.0" stroke="#111" stroke-width="1.6"/>
<text x="1847.0" y="919.2" font-size="13" font-weight="bold" fill="#111" textLength="66.0" lengthAdjust="spacingAndGlyphs" font-family="Liberation Sans" xml:space="preserve">OFFICE  229</text>
<path d="M1847.0 920.9 H1913.0" stroke="#111" stroke-width="1.6"/>
<text x="1756.7" y="1004.1" font-size="13" font-weight="bold" fill="#111" textLength="75.3" lengthAdjust="spacingAndGlyphs" font-family="Liberation Sans" xml:space="preserve">MEETING  232</text>
<path d="M1756.7 1005.8 H1832.0" stroke="#111" stroke-width="1.6"/>
<text x="1851.0" y="1004.1" font-size="13" font-weight="bold" fill="#111" textLength="67.0" lengthAdjust="spacingAndGlyphs" font-family="Liberation Sans" xml:space="preserve">OFFICE  230</text>
<path d="M1851.0 1005.8 H1918.0" stroke="#111" stroke-width="1.6"/>
<text x="371.0" y="928.8" font-size="13" font-weight="bold" fill="#111" textLength="99.0" lengthAdjust="spacingAndGlyphs" font-family="Liberation Sans" xml:space="preserve">OPEN OFFICE  244</text>
<path d="M371.0 930.5 H470.0" stroke="#111" stroke-width="1.6"/>
<g style="mix-blend-mode:multiply">
<rect x="891" y="157" width="186" height="100" fill="#fdf7b4" stroke="#e0201a" stroke-width="1.2"/>
<rect x="1126.7" y="199.6" width="238" height="95.4" fill="#f9b48c" stroke="#222" stroke-width="1.6"/>
<path d="M1548.0 168.0 A6.2 6.2 0 0 1 1559.8 168.0 A6.2 6.2 0 0 1 1571.7 168.0 A6.2 6.2 0 0 1 1583.5 168.0 A6.2 6.2 0 0 1 1595.4 168.0 A6.2 6.2 0 0 1 1607.2 168.0 A6.2 6.2 0 0 1 1619.1 168.0 A6.2 6.2 0 0 1 1630.9 168.0 A6.2 6.2 0 0 1 1642.8 168.0 A6.2 6.2 0 0 1 1654.6 168.0 A6.2 6.2 0 0 1 1666.5 168.0 A6.2 6.2 0 0 1 1678.3 168.0 A6.2 6.2 0 0 1 1690.2 168.0 A6.2 6.2 0 0 1 1702.0 168.0 A6.5 6.5 0 0 1 1702.0 180.3 A6.5 6.5 0 0 1 1702.0 192.6 A6.5 6.5 0 0 1 1702.0 204.9 A6.5 6.5 0 0 1 1702.0 217.2 A6.5 6.5 0 0 1 1702.0 229.5 A6.5 6.5 0 0 1 1702.0 241.8 A6.5 6.5 0 0 1 1702.0 254.2 A6.5 6.5 0 0 1 1702.0 266.5 A6.5 6.5 0 0 1 1702.0 278.8 A6.5 6.5 0 0 1 1702.0 291.1 A6.5 6.5 0 0 1 1702.0 303.4 A6.5 6.5 0 0 1 1702.0 315.7 A6.5 6.5 0 0 1 1702.0 328.0 A6.2 6.2 0 0 1 1690.2 327.6 A6.2 6.2 0 0 1 1678.4 327.2 A6.2 6.2 0 0 1 1666.6 326.8 A6.2 6.2 0 0 1 1654.8 326.4 A6.2 6.2 0 0 1 1643.0 326.0 A1.1 1.1 0 0 1 1643.0 324.0 A6.3 6.3 0 0 1 1636.5 313.9 A6.3 6.3 0 0 1 1630.0 303.7 A5.5 5.5 0 0 1 1622.5 296.4 A5.5 5.5 0 0 1 1615.0 289.1 A9.4 9.4 0 0 1 1600.0 279.4 A8.6 8.6 0 0 1 1585.0 273.0 A8.1 8.1 0 0 1 1570.0 269.3 A8.4 8.4 0 0 1 1554.0 268.0 A3.2 3.2 0 0 1 1548.0 268.0 A6.6 6.6 0 0 1 1548.0 255.5 A6.6 6.6 0 0 1 1548.0 243.0 A6.6 6.6 0 0 1 1548.0 230.5 A6.6 6.6 0 0 1 1548.0 218.0 A6.6 6.6 0 0 1 1548.0 205.5 A6.6 6.6 0 0 1 1548.0 193.0 A6.6 6.6 0 0 1 1548.0 180.5 A6.6 6.6 0 0 1 1548.0 168.0 Z" fill="#fde1cf" stroke="#e8201c" stroke-width="1.3"/>
<path d="M700 475.3 H1095 Q1117 475.3 1117 500 V710 Q1117 732 1095 732 H700 Z" fill="#b2c5dc" stroke="none"/>
<path d="M1427.0 478.0 A6.4 6.4 0 0 1 1439.2 478.0 A6.4 6.4 0 0 1 1451.3 478.0 A6.4 6.4 0 0 1 1463.5 478.0 A6.4 6.4 0 0 1 1475.7 478.0 A6.4 6.4 0 0 1 1487.8 478.0 A6.4 6.4 0 0 1 1500.0 478.0 A6.2 6.2 0 0 1 1500.0 489.7 A6.2 6.2 0 0 1 1500.0 501.5 A6.2 6.2 0 0 1 1500.0 513.2 A6.2 6.2 0 0 1 1500.0 524.9 A6.2 6.2 0 0 1 1500.0 536.7 A6.2 6.2 0 0 1 1500.0 548.4 A6.2 6.2 0 0 1 1500.0 560.1 A6.2 6.2 0 0 1 1500.0 571.9 A6.2 6.2 0 0 1 1500.0 583.6 A6.2 6.2 0 0 1 1500.0 595.3 A6.2 6.2 0 0 1 1500.0 607.1 A6.2 6.2 0 0 1 1500.0 618.8 A6.2 6.2 0 0 1 1500.0 630.5 A6.2 6.2 0 0 1 1500.0 642.3 A6.2 6.2 0 0 1 1500.0 654.0 A6.4 6.4 0 0 1 1487.8 654.0 A6.4 6.4 0 0 1 1475.7 654.0 A6.4 6.4 0 0 1 1463.5 654.0 A6.4 6.4 0 0 1 1451.3 654.0 A6.4 6.4 0 0 1 1439.2 654.0 A6.4 6.4 0 0 1 1427.0 654.0 A6.2 6.2 0 0 1 1427.0 642.3 A6.2 6.2 0 0 1 1427.0 630.5 A6.2 6.2 0 0 1 1427.0 618.8 A6.2 6.2 0 0 1 1427.0 607.1 A6.2 6.2 0 0 1 1427.0 595.3 A6.2 6.2 0 0 1 1427.0 583.6 A6.2 6.2 0 0 1 1427.0 571.9 A6.2 6.2 0 0 1 1427.0 560.1 A6.2 6.2 0 0 1 1427.0 548.4 A6.2 6.2 0 0 1 1427.0 536.7 A6.2 6.2 0 0 1 1427.0 524.9 A6.2 6.2 0 0 1 1427.0 513.2 A6.2 6.2 0 0 1 1427.0 501.5 A6.2 6.2 0 0 1 1427.0 489.7 A6.2 6.2 0 0 1 1427.0 478.0 Z" fill="#cfe3b5" stroke="#e02020" stroke-width="1.2"/>
<rect x="1517" y="558.8" width="70.4" height="24.5" fill="#cfe3b5"/>
<rect x="1615" y="482.7" width="58.3" height="75.3" fill="#fdf7a0" stroke="#e02020" stroke-width="1.5"/><path d="M1615 482.7 L1673.3 558 M1673.3 482.7 L1615 558" stroke="#555" stroke-width="0.8"/>
<path d="M1700.0 484.0 A8.0 8.0 0 0 1 1715.3 484.0 A8.0 8.0 0 0 1 1730.5 484.0 A8.0 8.0 0 0 1 1745.8 484.0 A8.0 8.0 0 0 1 1761.1 484.0 A8.0 8.0 0 0 1 1776.4 484.0 A8.0 8.0 0 0 1 1791.6 484.0 A8.0 8.0 0 0 1 1806.9 484.0 A8.0 8.0 0 0 1 1822.2 484.0 A8.0 8.0 0 0 1 1837.5 484.0 A8.0 8.0 0 0 1 1852.7 484.0 A8.0 8.0 0 0 1 1868.0 484.0 A7.6 7.6 0 0 1 1868.0 498.5 A7.6 7.6 0 0 1 1868.0 513.0 A7.6 7.6 0 0 1 1868.0 527.5 A7.6 7.6 0 0 1 1868.0 542.0 A7.6 7.6 0 0 1 1868.0 556.5 A7.6 7.6 0 0 1 1868.0 571.0 A7.6 7.6 0 0 1 1868.0 585.5 A7.6 7.6 0 0 1 1868.0 600.0 A8.0 8.0 0 0 1 1852.7 600.0 A8.0 8.0 0 0 1 1837.5 600.0 A8.0 8.0 0 0 1 1822.2 600.0 A8.0 8.0 0 0 1 1806.9 600.0 A8.0 8.0 0 0 1 1791.6 600.0 A8.0 8.0 0 0 1 1776.4 600.0 A8.0 8.0 0 0 1 1761.1 600.0 A8.0 8.0 0 0 1 1745.8 600.0 A8.0 8.0 0 0 1 1730.5 600.0 A8.0 8.0 0 0 1 1715.3 600.0 A8.0 8.0 0 0 1 1700.0 600.0 A7.6 7.6 0 0 1 1700.0 585.5 A7.6 7.6 0 0 1 1700.0 571.0 A7.6 7.6 0 0 1 1700.0 556.5 A7.6 7.6 0 0 1 1700.0 542.0 A7.6 7.6 0 0 1 1700.0 527.5 A7.6 7.6 0 0 1 1700.0 513.0 A7.6 7.6 0 0 1 1700.0 498.5 A7.6 7.6 0 0 1 1700.0 484.0 Z" fill="#f6b8bc" stroke="#e02020" stroke-width="1.2"/>
<rect x="1794" y="537" width="60" height="9.5" fill="#f29aa0"/>
</g>
<text x="958.0" y="232.4" font-size="12.5" font-weight="normal" fill="#e8201c" textLength="52.0" lengthAdjust="spacingAndGlyphs" font-family="Liberation Sans" xml:space="preserve">204.62 sf</text>
<text x="860.9" y="613.0" font-size="17" font-weight="bold" fill="#e0201c" textLength="91.3" lengthAdjust="spacingAndGlyphs" font-family="Liberation Sans" xml:space="preserve">160.89 sq m</text>
<text x="1518.0" y="566.4" font-size="10" font-weight="bold" fill="#e02020" textLength="65.0" lengthAdjust="spacingAndGlyphs" font-family="Liberation Sans" xml:space="preserve">Split into three</text>
<text x="1796" y="545" font-size="8.5" font-weight="bold" fill="#6a1a28" textLength="56" lengthAdjust="spacingAndGlyphs">MergeChambers</text>
<rect x="253" y="300" width="180" height="560" fill="#fff"/>
<rect x="249.5" y="300" width="3" height="560" fill="#111"/>
<path d="M247.5 300 V860" fill="none" stroke="#222" stroke-width="1" />
<path d="M252 411 L412 401 Q430 402 430 422 V470" fill="none" stroke="#1a1a1a" stroke-width="4.5" />
<path d="M252 411 L412 401 Q430 402 430 422 V470" fill="none" stroke="url(#hatch)" stroke-width="2.9" />
<path d="M252 798 L400 806" fill="none" stroke="#1a1a1a" stroke-width="4.5" />
<path d="M252 798 L400 806" fill="none" stroke="url(#hatch)" stroke-width="2.9" />
<path d="M250 509.7 H400" fill="none" stroke="#1a1a1a" stroke-width="4.5" />
<path d="M250 509.7 H400" fill="none" stroke="url(#hatch)" stroke-width="2.9" />
<path d="M250 699.8 H400" fill="none" stroke="#1a1a1a" stroke-width="4.5" />
<path d="M250 699.8 H400" fill="none" stroke="url(#hatch)" stroke-width="2.9" />
<path d="M272 190 V1175" fill="none" stroke="#444" stroke-width="1.3" stroke-dasharray="57 10 38 10" />
<path d="M205 462.5 H434" fill="none" stroke="#444" stroke-width="1.3" stroke-dasharray="10 9 38 9" />
<path d="M205 747 H434" fill="none" stroke="#444" stroke-width="1.3" stroke-dasharray="10 9 38 9" />
<path d="M430 399 L640 380" fill="none" stroke="#222" stroke-width="1.1" />
<rect x="301.4" y="533.4" width="75.2" height="142.6" fill="none" stroke="#111" stroke-width="1.1"/>
<text x="300.0" y="462.6" font-size="13" font-weight="bold" fill="#111" textLength="75.8" lengthAdjust="spacingAndGlyphs" font-family="Liberation Sans" xml:space="preserve">MEETING  247</text>
<path d="M300.0 464.3 H375.8" stroke="#111" stroke-width="1.6"/>
<text x="293.2" y="613.8" font-size="13" font-weight="bold" fill="#111" textLength="101.0" lengthAdjust="spacingAndGlyphs" font-family="Liberation Sans" xml:space="preserve">CONFERENCE  246</text>
<path d="M293.2 615.5 H394.2" stroke="#111" stroke-width="1.6"/>
<text x="305.5" y="759.0" font-size="13" font-weight="bold" fill="#111" textLength="75.5" lengthAdjust="spacingAndGlyphs" font-family="Liberation Sans" xml:space="preserve">MEETING  245</text>
<path d="M305.5 760.7 H381.0" stroke="#111" stroke-width="1.6"/>
<path d="M267.5 458.5 H276.5 M267.5 466.0 H276.5 M272 456.5 V466.5" fill="none" stroke="#222" stroke-width="1.4" />
<path d="M267.5 743 H276.5 M267.5 750.5 H276.5 M272 741 V751" fill="none" stroke="#222" stroke-width="1.4" />
<path d="M251.0 805.0 A7.1 7.1 0 1 1 251.0 790.8 A7.1 7.1 0 1 1 251.0 776.5 A7.1 7.1 0 1 1 251.0 762.2 A7.1 7.1 0 1 1 251.0 748.0 A7.1 7.1 0 1 1 251.0 733.8 A7.1 7.1 0 1 1 251.0 719.5 A7.1 7.1 0 1 1 251.0 705.2 A7.1 7.1 0 1 1 251.0 691.0 A7.1 7.1 0 1 1 251.0 676.8 A7.1 7.1 0 1 1 251.0 662.5 A7.1 7.1 0 1 1 251.0 648.2 A7.1 7.1 0 1 1 251.0 634.0 A7.1 7.1 0 1 1 251.0 619.8 A7.1 7.1 0 1 1 251.0 605.5 A7.1 7.1 0 1 1 251.0 591.2 A7.1 7.1 0 1 1 251.0 577.0 A7.1 7.1 0 1 1 251.0 562.8 A7.1 7.1 0 1 1 251.0 548.5 A7.1 7.1 0 1 1 251.0 534.2 A7.1 7.1 0 1 1 251.0 520.0 A7.1 7.1 0 1 1 251.0 505.8 A7.1 7.1 0 1 1 251.0 491.5 A7.1 7.1 0 1 1 251.0 477.2 A7.1 7.1 0 1 1 251.0 463.0 A7.1 7.1 0 1 1 251.0 448.8 A7.1 7.1 0 1 1 251.0 434.5 A7.1 7.1 0 1 1 251.0 420.2 A7.1 7.1 0 1 1 251.0 406.0 A6.8 6.8 0 1 1 264.5 405.0 A6.8 6.8 0 1 1 278.0 404.0 A6.8 6.8 0 1 1 291.5 403.0 A6.8 6.8 0 1 1 305.0 402.0 A6.8 6.8 0 1 1 318.5 401.0 A6.8 6.8 0 1 1 332.0 400.0 A6.8 6.8 0 1 1 345.5 399.0 A6.8 6.8 0 1 1 359.0 398.0 A6.8 6.8 0 1 1 372.5 397.0 A6.8 6.8 0 1 1 386.0 396.0 A6.8 6.8 0 1 1 399.5 395.0 A6.8 6.8 0 1 1 413.0 394.0 A6.5 6.5 0 1 1 425.0 399.0 A7.6 7.6 0 1 1 433.0 412.0 A7.3 7.3 0 1 1 433.2 426.5 A7.3 7.3 0 1 1 433.5 441.0 A7.3 7.3 0 1 1 433.8 455.5 A7.3 7.3 0 1 1 434.0 470.0 L434 812 L400 812 A6.7 6.7 0 1 1 386.6 811.2 A6.7 6.7 0 1 1 373.3 810.4 A6.7 6.7 0 1 1 359.9 809.5 A6.7 6.7 0 1 1 346.5 808.7 A6.7 6.7 0 1 1 333.2 807.9 A6.7 6.7 0 1 1 319.8 807.1 A6.7 6.7 0 1 1 306.5 806.3 A6.7 6.7 0 1 1 293.1 805.5 A6.7 6.7 0 1 1 279.7 804.6 A6.7 6.7 0 1 1 266.4 803.8 A6.7 6.7 0 1 1 253.0 803.0 Z" fill="#7a4a9a" fill-opacity="0.3" stroke="none"/>
<path d="M251.0 805.0 A7.1 7.1 0 1 1 251.0 790.8 A7.1 7.1 0 1 1 251.0 776.5 A7.1 7.1 0 1 1 251.0 762.2 A7.1 7.1 0 1 1 251.0 748.0 A7.1 7.1 0 1 1 251.0 733.8 A7.1 7.1 0 1 1 251.0 719.5 A7.1 7.1 0 1 1 251.0 705.2 A7.1 7.1 0 1 1 251.0 691.0 A7.1 7.1 0 1 1 251.0 676.8 A7.1 7.1 0 1 1 251.0 662.5 A7.1 7.1 0 1 1 251.0 648.2 A7.1 7.1 0 1 1 251.0 634.0 A7.1 7.1 0 1 1 251.0 619.8 A7.1 7.1 0 1 1 251.0 605.5 A7.1 7.1 0 1 1 251.0 591.2 A7.1 7.1 0 1 1 251.0 577.0 A7.1 7.1 0 1 1 251.0 562.8 A7.1 7.1 0 1 1 251.0 548.5 A7.1 7.1 0 1 1 251.0 534.2 A7.1 7.1 0 1 1 251.0 520.0 A7.1 7.1 0 1 1 251.0 505.8 A7.1 7.1 0 1 1 251.0 491.5 A7.1 7.1 0 1 1 251.0 477.2 A7.1 7.1 0 1 1 251.0 463.0 A7.1 7.1 0 1 1 251.0 448.8 A7.1 7.1 0 1 1 251.0 434.5 A7.1 7.1 0 1 1 251.0 420.2 A7.1 7.1 0 1 1 251.0 406.0 A6.8 6.8 0 1 1 264.5 405.0 A6.8 6.8 0 1 1 278.0 404.0 A6.8 6.8 0 1 1 291.5 403.0 A6.8 6.8 0 1 1 305.0 402.0 A6.8 6.8 0 1 1 318.5 401.0 A6.8 6.8 0 1 1 332.0 400.0 A6.8 6.8 0 1 1 345.5 399.0 A6.8 6.8 0 1 1 359.0 398.0 A6.8 6.8 0 1 1 372.5 397.0 A6.8 6.8 0 1 1 386.0 396.0 A6.8 6.8 0 1 1 399.5 395.0 A6.8 6.8 0 1 1 413.0 394.0 A6.5 6.5 0 1 1 425.0 399.0 A7.6 7.6 0 1 1 433.0 412.0 A7.3 7.3 0 1 1 433.2 426.5 A7.3 7.3 0 1 1 433.5 441.0 A7.3 7.3 0 1 1 433.8 455.5 A7.3 7.3 0 1 1 434.0 470.0" fill="none" stroke="#3d4f9e" stroke-width="1.1"/>
<path d="M400.0 812.0 A6.7 6.7 0 1 1 386.6 811.2 A6.7 6.7 0 1 1 373.3 810.4 A6.7 6.7 0 1 1 359.9 809.5 A6.7 6.7 0 1 1 346.5 808.7 A6.7 6.7 0 1 1 333.2 807.9 A6.7 6.7 0 1 1 319.8 807.1 A6.7 6.7 0 1 1 306.5 806.3 A6.7 6.7 0 1 1 293.1 805.5 A6.7 6.7 0 1 1 279.7 804.6 A6.7 6.7 0 1 1 266.4 803.8 A6.7 6.7 0 1 1 253.0 803.0" fill="none" stroke="#3d4f9e" stroke-width="1.1"/>
<path d="M236 384.6 H446 M236 384.6 V825 H400 M446 384.6 V470" fill="none" stroke="#3aa0e0" stroke-width="1" stroke-dasharray="2 2" />
<path d="M341 357 V384" fill="none" stroke="#3aa0e0" stroke-width="1" stroke-dasharray="2 2" />
<path d="M205.7 362 H469.8 M458 351 V455" fill="none" stroke="#f6b92c" stroke-width="3" />
<path d="M217.5 350.7 V640" fill="none" stroke="#f6b92c" stroke-width="3" />
<path d="M217.5 640 V848.5 M206.8 838 H386.6" fill="none" stroke="#d6d43a" stroke-width="3" />
<circle cx="341" cy="351.2" r="6" fill="#3b8fd0" stroke="#2a6ea8" stroke-width="1"/>
<rect x="230.5" y="379.1" width="11" height="11" fill="#3b8fd0" stroke="#1d5f96" stroke-width="1"/>
<rect x="440.2" y="379.1" width="11" height="11" fill="#3b8fd0" stroke="#1d5f96" stroke-width="1"/>
<rect x="230.3" y="819.5" width="11" height="11" fill="#3b8fd0" stroke="#1d5f96" stroke-width="1"/>
<circle cx="251.8" cy="410.7" r="5.5" fill="#b09a2a" stroke="#6f6416" stroke-width="1"/>
<circle cx="414.6" cy="400.2" r="5.5" fill="#b09a2a" stroke="#6f6416" stroke-width="1"/>
<circle cx="429.3" cy="422.3" r="5.5" fill="#b09a2a" stroke="#6f6416" stroke-width="1"/>
<circle cx="253.6" cy="797.3" r="5.5" fill="#b09a2a" stroke="#6f6416" stroke-width="1"/>
</g></svg>
<div id="menubar" class="a">
<span style="left:25px">Revu</span><span style="left:105px">File</span><span style="left:174px">Edit</span><span style="left:244px">View</span><span style="left:321px">Document</span><span style="left:443px">Batch</span><span style="left:529px">Tools</span><span style="left:611px">Window</span><span style="left:715px">Help</span>
<span style="left:1579px;top:4px;font-weight:bold;font-size:16px;letter-spacing:0px">taimoor@brightergraphics.com</span>
<svg class="a" style="left:1525px;top:0" width="50" height="27" viewBox="1525 0 50 27"><circle cx="1549.8" cy="14.5" r="15.5" fill="#fff"/><path d="M1545.5 -1 Q1537.5 9 1538.5 28" stroke="#000" stroke-width="3.6" fill="none"/><path d="M1541.5 18.5 Q1545 15 1551 14.8 Q1559.5 13.8 1560.5 6 Q1560.5 0.5 1553 -1" stroke="#000" stroke-width="3.4" fill="none"/><path d="M1541.5 18 L1551.5 28" stroke="#000" stroke-width="3.8"/><path d="M1557 -1 Q1566 3 1565.5 8" stroke="#000" stroke-width="2.5" fill="none"/></svg>
<svg class="a" style="left:1838px;top:0" width="172" height="27" viewBox="0 0 172 27"><path d="M2 13.5 H24" stroke="#fff" stroke-width="2"/><rect x="66" y="9" width="16" height="15" fill="none" stroke="#fff" stroke-width="2"/><path d="M70 9 V5 H86 V20 H82" fill="none" stroke="#fff" stroke-width="2"/><path d="M131 4 L151 24 M151 4 L131 24" stroke="#fff" stroke-width="2.2"/></svg>
</div>

<div id="toolbar" class="a">
 <div class="box" style="left:10px;width:61px"></div>
 <svg class="a" style="left:12px;top:9px" width="60" height="34" viewBox="0 0 60 34"><path d="M15.00 8.40 A3.0 3.0 0 1 1 20.53 10.41 A3.0 3.0 0 1 1 23.47 15.51 A3.0 3.0 0 1 1 22.45 21.30 A3.0 3.0 0 1 1 17.94 25.08 A3.0 3.0 0 1 1 12.06 25.08 A3.0 3.0 0 1 1 7.55 21.30 A3.0 3.0 0 1 1 6.53 15.51 A3.0 3.0 0 1 1 9.47 10.41 A3.0 3.0 0 1 1 15.00 8.40 Z" fill="none" stroke="#fff" stroke-width="1.9"/><path d="M39 15 l5 5 l5 -5" fill="none" stroke="#fff" stroke-width="1.8"/></svg>
 <span class="tl" style="left:86px">Line:</span>
 <div class="box" style="left:128px;width:34px"></div>
 <div class="a" style="left:137px;top:16px;width:18px;height:19px;background:#2a4fb5;border:2px solid #c9d4f5"></div>
 <div class="box" style="left:176px;width:86px"></div>
 <div class="a" style="left:197px;top:9px;width:2px;height:34px;background:#6e6e6e"></div>
 <div class="a" style="left:178px;top:25px;width:19px;height:2px;background:#6e6e6e"></div>
 <svg class="a" style="left:178px;top:10px" width="20" height="32" viewBox="0 0 20 32"><path d="M5 9 l5 -4 l5 4 M5 22 l5 4 l5 -4" fill="none" stroke="#fff" stroke-width="1.6"/></svg>
 <span class="tl" style="left:210px;font-size:16.5px">100%</span>
 <div class="box" style="left:276px;width:161px"></div>
 <svg class="a" style="left:278px;top:9px" width="158" height="34" viewBox="0 0 158 34"><path d="M15.0 26.5 V19 A10.5 10.5 0 0 1 36.0 19 M34.0 26.5 V19 A10.5 10.5 0 0 1 55.0 19 M53.0 26.5 V19 A10.5 10.5 0 0 1 74.0 19 M72.0 26.5 V19 A10.5 10.5 0 0 1 93.0 19 M91.0 26.5 V19 A10.5 10.5 0 0 1 112.0 19 M110 26.5 V19 A10 10 0 0 1 120.5 8.5" fill="none" stroke="#eee" stroke-width="2.2"/><path d="M134 15 l6 6 l6 -6" fill="none" stroke="#fff" stroke-width="1.8"/></svg>
 <div class="box" style="left:450px;width:62px"></div>
 <svg class="a" style="left:452px;top:9px" width="60" height="34" viewBox="0 0 60 34"><path d="M2.5 10.5 A3.2 3.2 0 0 1 8.9 10.5 M8.9 10.5 A3.2 3.2 0 0 1 15.3 10.5 M15.3 10.5 A3.2 3.2 0 0 1 21.7 10.5 M21.7 10.5 A3.2 3.2 0 0 1 28.1 10.5 M2.5 19.5 A4.25 4.25 0 0 1 11.0 19.5 M11.0 19.5 A4.25 4.25 0 0 1 19.5 19.5 M19.5 19.5 A4.25 4.25 0 0 1 28.0 19.5 M2.5 28 A6.4 6.4 0 0 1 15.2 28 M15.2 28 A6.4 6.4 0 0 1 28.0 28 " fill="none" stroke="#eee" stroke-width="1.6"/><path d="M39 15 l6 6 l6 -6" fill="none" stroke="#fff" stroke-width="1.8"/></svg>
 <div class="box" style="left:525px;width:116px"></div>
 <div class="a" style="left:546px;top:9px;width:2px;height:34px;background:#6e6e6e"></div>
 <div class="a" style="left:527px;top:25px;width:19px;height:2px;background:#6e6e6e"></div>
 <svg class="a" style="left:527px;top:10px" width="20" height="32" viewBox="0 0 20 32"><path d="M5 9 l5 -4 l5 4 M5 22 l5 4 l5 -4" fill="none" stroke="#fff" stroke-width="1.6"/></svg>
 <span class="tl" style="left:578px;font-size:16.5px">1.00 pt</span>
 <span class="tl" style="left:654px">Fill:</span>
 <div class="box" style="left:686px;width:34px"></div>
 <div class="a" style="left:693px;top:16px;width:20px;height:19px;background:#8b3fae;border:2px solid #eac8f0"></div>
 <div class="box" style="left:734px;width:86px"></div>
 <div class="a" style="left:755px;top:9px;width:2px;height:34px;background:#6e6e6e"></div>
 <div class="a" style="left:736px;top:25px;width:19px;height:2px;background:#6e6e6e"></div>
 <svg class="a" style="left:736px;top:10px" width="20" height="32" viewBox="0 0 20 32"><path d="M5 9 l5 -4 l5 4 M5 22 l5 4 l5 -4" fill="none" stroke="#fff" stroke-width="1.6"/></svg>
 <span class="tl" style="left:777px;font-size:16.5px">31%</span>
 <span class="tl" style="left:841px">Hatch:</span>
 <div class="box" style="left:897px;width:71px"></div>
 <svg class="a" style="left:940px;top:20px" width="20" height="14" viewBox="0 0 20 14"><path d="M3 3 l6 6 l6 -6" fill="none" stroke="#fff" stroke-width="1.8"/></svg>
 <div class="box" style="left:981px;width:35px"></div>
 <svg class="a" style="left:0;top:0" width="1030" height="51" viewBox="0 27 1030 51" fill="none"><path d="M1003.6 40.6 L994.8 47.7 L1012.1 59.7 M994.8 47.7 L992.6 55.3 L1001.1 62.9 L1003.2 64 L1012.1 59.7" stroke="#d8b02a" stroke-width="1.7"/><path d="M985.6 66.4 L993.3 56.9 L999.7 63.6 L997.6 66.4 Z" stroke="#fff" stroke-width="1.7"/></svg>
</div>

<div id="tabbar" class="a">
 <svg class="a" style="left:9px;top:16px" width="30" height="16" viewBox="0 0 30 16"><rect x="1.5" y="1.5" width="27" height="13" fill="none" stroke="#fff" stroke-width="2"/><path d="M7 2 v6 M12 2 v6 M17 2 v6 M22 2 v6" stroke="#fff" stroke-width="2"/></svg>
 <svg class="a" style="left:1920px;top:17px" width="20" height="14" viewBox="0 0 20 14"><path d="M4 3 l6 6 l6 -6" fill="none" stroke="#fff" stroke-width="1.6"/></svg>
</div>
<div id="tab" class="a"><span class="a" style="left:12px;top:15px;font-size:16.2px;color:#eee;white-space:nowrap">Brighter Graphics - Floor Plan 1*</span>
<svg class="a" style="left:265px;top:15px" width="20" height="20" viewBox="0 0 20 20"><path d="M3 3 L17 17 M17 3 L3 17" stroke="#fff" stroke-width="1.8"/></svg></div>
<div id="sidebar" class="a">
<div class="a" style="left:0;top:194px;width:48px;height:48px;background:#1c5b8c"></div>
<svg class="a" style="left:0;top:0" width="48" height="1049" viewBox="0 127 48 1049" fill="none" stroke="#fff" stroke-width="2">
 <!-- file cabinet 150 -->
 <rect x="14" y="138" width="20" height="26"/><path d="M14 151 H34 M21 144 h6 M21 157 h6"/>
 <!-- grid 200 -->
 <rect x="12" y="188" width="10" height="10"/><rect x="26" y="188" width="10" height="10"/><rect x="12" y="202" width="10" height="10"/><rect x="26" y="202" width="10" height="10"/>
 <!-- bookmark 248 -->
 <rect x="13" y="235" width="22" height="26"/><path d="M19 235 V250 l3 -3 l3 3 V235"/>
 <!-- floor plan 296 -->
 <path d="M13 283 H35 V303 H25 M13 283 V309 H22 V299 H16 M30 291 h5 M13 293 h5"/>
 <!-- toolbox 344 -->
 <rect x="12" y="336" width="24" height="18" rx="2"/><path d="M19 336 v-4 h10 v4 M12 344 H36 M20 342 v5 M28 342 v5"/>
 <!-- gear 394 -->
 <path d="M32.83 395.72 L35.59 397.12 L34.40 399.99 L31.46 399.03 L29.03 401.46 L29.99 404.40 L27.12 405.59 L25.72 402.83 L22.28 402.83 L20.88 405.59 L18.01 404.40 L18.97 401.46 L16.54 399.03 L13.60 399.99 L12.41 397.12 L15.17 395.72 L15.17 392.28 L12.41 390.88 L13.60 388.01 L16.54 388.97 L18.97 386.54 L18.01 383.60 L20.88 382.41 L22.28 385.17 L25.72 385.17 L27.12 382.41 L29.99 383.60 L29.03 386.54 L31.46 388.97 L34.40 388.01 L35.59 390.88 L32.83 392.28Z" stroke-linejoin="round" stroke-width="1.8"/><circle cx="24" cy="394" r="5.8" stroke-width="1.8"/>
 <!-- form edit 442 -->
 <path d="M30 430 H13 V456 H34 V446 M17 437 h10 M17 443 h8 M17 449 h6"/><path d="M24 450 l12 -13 l2 2 l-12 13 l-3 1z"/>
 <!-- pen 490 -->
 <path d="M12 503 H36 M16 498 l4 -12 l9 -5 l5 5 l-5 9z M16 498 l7 -7"/><circle cx="24" cy="490" r="1.5"/>
 <!-- tag 538 -->
 <path d="M13 538 l8 -9 H35 V547 H21z"/>
 <!-- scanner 586 -->
 <path d="M13 587 H35 V572 H13z M17 584 l2 -9 h10 l2 9 M13 592 h22 M13 597 h22"/>
 <!-- search 635 -->
 <circle cx="21" cy="632" r="8"/><path d="M27 638 l8 8"/>
 <!-- polygon door 683 -->
 <path d="M13 676 l13 -7 l10 7 v10 l-3 9 l-20 -2z M17 693 v-7 h6 v8"/>
 <!-- layers 731 -->
 <path d="M24 720 l11 7 l-11 7 l-11 -7z M13 734 l11 7 l11 -7"/>
</svg>
</div>
<div id="scrolltrack" class="a" style="left:1930px;top:127px;width:24px;height:1048px;background:#ececec"></div>
<div class="a" style="left:1936px;top:430px;width:10px;height:455px;background:#8a8a8a"></div>
<div id="rightbar" class="a">
<svg class="a" style="left:-1px;top:-48px" width="58" height="1097" viewBox="1952 79 58 1097" fill="none" stroke="#fff" stroke-width="2">
 <path d="M1957 85 H1997" stroke-dasharray="2 1.7" stroke="#bbb"/>
 <path d="M1964.5 126.5 L1988.5 102.5"/>
 <path d="M1964.5 174.5 L1984 155"/><path d="M1980 151.5 L1988.5 150.5 L1987.5 159.5z" fill="#fff" stroke="#fff" stroke-width="1.5" stroke-linejoin="round"/>
 <path d="M1964.5 223.5 Q1966 202 1989.5 199.5"/>
 <path d="M1964.5 272.5 L1967.5 259 L1976.5 264.5 L1974 251 L1985 254.5 L1989 247.5"/>
 <path d="M1965.5 309 H1987.5" stroke-width="1.8"/><path d="M1964 304 L1968 314 M1968 304 L1964 314 M1985 304 L1989 314 M1989 304 L1985 314" stroke-width="1.4"/>
 <rect x="1964.5" y="347.5" width="24.5" height="19"/>
 <ellipse cx="1976.7" cy="404.7" rx="12.3" ry="9.3"/>
 <path d="M1964.6 440.5 H1981.5 L1977 453 L1988.5 465.8 H1964.6z"/>
<path d="M1966 490.5 H1990 M1966 490.5 V518 M1969 490.5 v-3 M1973 490.5 v-3 M1977 490.5 v-3 M1981 490.5 v-3 M1985 490.5 v-3 M1989 490.5 v-3 M1966 494.0 h-3 M1966 498.0 h-3 M1966 502.0 h-3 M1966 506.0 h-3 M1966 510.0 h-3 M1966 514.0 h-3" stroke="#7a5cc0" stroke-width="1.5"/>
 <path d="M1972 504.5 L1979 497 H1988 V513.5 H1972z" stroke-width="1.6"/><path d="M1970 502.5 h4 v4 h-4z M1977 495 h4 v4 h-4z M1986 495 h4 v4 h-4z M1986 511.5 h4 v4 h-4z M1970 511.5 h4 v4 h-4z" fill="#fff" stroke="none"/>
<path d="M1966 537.5 H1990 M1966 537.5 V564 M1969 537.5 v-3 M1973 537.5 v-3 M1977 537.5 v-3 M1981 537.5 v-3 M1985 537.5 v-3 M1989 537.5 v-3 M1966 541.0 h-3 M1966 545.0 h-3 M1966 549.0 h-3 M1966 553.0 h-3 M1966 557.0 h-3 M1966 561.0 h-3" stroke="#7a5cc0" stroke-width="1.5"/>
 <path d="M1970 563 V549 L1980.5 543 H1988 V563z" stroke-width="1.8"/>
<path d="M1966 586.5 H1990 M1966 586.5 V611 M1969 586.5 v-3 M1973 586.5 v-3 M1977 586.5 v-3 M1981 586.5 v-3 M1985 586.5 v-3 M1989 586.5 v-3 M1966 590.0 h-3 M1966 594.0 h-3 M1966 598.0 h-3 M1966 602.0 h-3 M1966 606.0 h-3 M1966 610.0 h-3" stroke="#7a5cc0" stroke-width="1.5"/>
 <path d="M1970 593 v14 M1988 593 v14 M1972 600.3 H1986" stroke-width="1.6"/><path d="M1971.5 600.3 l4 -3 v6z M1986.5 600.3 l-4 -3 v6z" fill="#fff" stroke="none"/>
<path d="M1966 634.5 H1990 M1966 634.5 V660 M1969 634.5 v-3 M1973 634.5 v-3 M1977 634.5 v-3 M1981 634.5 v-3 M1985 634.5 v-3 M1989 634.5 v-3 M1966 638.0 h-3 M1966 642.0 h-3 M1966 646.0 h-3 M1966 650.0 h-3 M1966 654.0 h-3 M1966 658.0 h-3" stroke="#7a5cc0" stroke-width="1.5"/>
 <path d="M1973 657 l3 -15 M1977 657 l3 -15 M1981 657 l3 -15 M1985 657 l3 -15 M1970 653 l20 -8" stroke-width="1.6"/>
 <path d="M1957 676 H1997" stroke-dasharray="2 1.7" stroke="#bbb"/>
 <rect x="1969.5" y="693.5" width="23" height="23"/><text x="1981" y="711" fill="#fff" stroke="none" font-size="15" text-anchor="middle" font-family="Liberation Sans">A</text>
 <path d="M1985 742 L1978 748 L1994 759 M1978 748 L1975.5 755 L1985 764.5 L1988 761 L1994 759 M1976 755 L1986 763" stroke="#c9c832" stroke-width="1.6"/><path d="M1969.5 766 L1977 757.5 L1983 764 L1980 766 Z" stroke="#fff" stroke-width="1.6"/>
 <path d="M1985 789.5 L1975.5 801.5 L1983 808.5 L1993 799.5 M1975.5 801.5 L1971 810 L1976 814 L1983 808.5" stroke="#4a5ad0" stroke-width="1.6"/><path d="M1968.5 813 L1971.5 809.5 L1975 812.5 L1972 816z" fill="#c0f0f8" stroke="#c0f0f8" stroke-width="1"/>
 <path d="M1968 838 H1988 V849 H1968z M1988 849 l4 4 M1967 860 q3 -5 6 0 q3 -5 6 0 q3 -5 6 0 q3 -5 6 0"/>
 <path d="M1981.40 888.20 A3.3 3.3 0 1 1 1987.27 890.63 A3.3 3.3 0 1 1 1989.70 896.50 A3.3 3.3 0 1 1 1987.27 902.37 A3.3 3.3 0 1 1 1981.40 904.80 A3.3 3.3 0 1 1 1975.53 902.37 A3.3 3.3 0 1 1 1973.10 896.50 A3.3 3.3 0 1 1 1975.53 890.63 A3.3 3.3 0 1 1 1981.40 888.20 Z" stroke-width="1.8"/>
 <path d="M1969 925.5 H1987 V936 H1969z M1987 936 l5 5 l-9 10 M1983 945 v6 h6" stroke-width="1.8"/>
 <path d="M1969 1005 H1993 M1969 993 H1993 V1001 H1969z M1976 993 l1 -8 q-4 -3 -1 -7 q4 -3 8 0 q3 4 -1 7 l1 8" stroke-width="1.8"/><path d="M1992 996 l4.5 4.5 l4.5 -4.5" stroke-width="1.6"/>
 <rect x="1968" y="1030" width="24" height="23"/><path d="M1968 1049 l7 -8 l5 5 l6 -7 l6 7"/><circle cx="1975" cy="1036" r="2"/>
 <path d="M1970 1082 H1994 V1106 H1970z" stroke-dasharray="3 3"/><path d="M1970 1076 v10 M1965 1082 h10" />
</svg>
</div>
<div id="bottombar" class="a">
 <div class="a" style="left:0;top:1px;width:48px;height:48px;background:#1c5b8c"></div>
 <svg class="a" style="left:0;top:0" width="2010" height="50" viewBox="0 1175 2010 50" fill="none" stroke="#fff" stroke-width="2">
  <path d="M13 1194 h3 M20 1194 h15 M13 1200 h3 M20 1200 h15 M13 1206 h3 M20 1206 h15" stroke="#dff" stroke-width="3"/>
  <rect x="61.5" y="1187.5" width="23" height="23" stroke="#6a6a6a" stroke-width="1.4"/><path d="M61.5 1190.5 h23" stroke="#6a6a6a" stroke-width="1.4"/>
  <rect x="110" y="1187.5" width="23" height="23" stroke-width="1.6"/><path d="M121.5 1187.5 v23 M110 1190.5 h23" stroke-width="1.6"/>
  <rect x="158.5" y="1187.5" width="23" height="23" stroke-width="1.6"/><path d="M158.5 1190.5 h23 M158.5 1198.5 h23 M158.5 1202 h23" stroke-width="1.4"/>
  <path d="M197.5 1187 v25" stroke="#888" stroke-width="1.2"/>
  <path d="M215.5 1187.5 h12 l6.5 6.5 v18 h-18.5z M227.5 1187.5 v6.5 h6.5" stroke-width="1.6"/><path d="M224.5 1195 v14 M217.5 1202 h14" stroke-width="1.3"/><path d="M224.5 1193.5 l-2.5 3 h5z M224.5 1210.5 l-2.5 -3 h5z M216 1202 l3 -2.5 v5z M233 1202 l-3 -2.5 v5z" fill="#fff" stroke="none"/>
  <path d="M263.5 1187 v5 h19 v-5" stroke-width="1.6"/><path d="M263.5 1212 v-16 h11 l4 4 v12 M274.5 1196 v4 h4 M282.5 1201 v11" stroke-width="1.6"/><path d="M266 1209 h14" stroke-width="1.3"/><path d="M264.5 1209 l3.5 -2.5 v5z M281.5 1209 l-3.5 -2.5 v5z" fill="#fff" stroke="none"/>
  <path d="M708.5 1193 l-7.5 6 l7.5 6z" stroke="#777" stroke-width="1.5"/>
  <rect x="731" y="1188" width="340" height="24" rx="2" stroke="#6a6a6a"/>
  <path d="M1093 1193 l7 6 l-7 6z" stroke="#666" stroke-width="1.5"/>
  <path d="M1141 1193 l7 6 l-7 6z M1151 1192 v14" stroke="#666" stroke-width="1.5"/>
  <path d="M1175 1186 v26" stroke="#666"/>
  <circle cx="1199" cy="1199" r="12"/><path d="M1202 1193 l-7 6 l7 6z" stroke-width="1.6"/>
  <circle cx="1247" cy="1199" r="12" stroke="#666"/><path d="M1244 1193 l7 6 l-7 6z" stroke="#666" stroke-width="1.6"/>
 </svg>
 <span class="a" style="left:835px;top:15px;font-size:16.2px;color:#eee;white-space:nowrap">Floor Plan (1 of 1)</span>
 <span class="a" style="left:1429px;top:15px;font-size:18px;color:#eee;white-space:nowrap">106.68 x 76.20 cm</span>
 <span class="a" style="left:1606px;top:15px;font-size:17.8px;color:#eee;white-space:nowrap">X: 9.525 cm = 30'-0", Y: 9.525 cm = 30'-0"</span>
</div>
<div id="statusbar" class="a">
 <span class="a" style="left:2px;top:13px;font-size:16.45px;color:#eee;white-space:nowrap">Drag control points to resize, or drag cloud to move</span>
 <div class="a" style="left:1135px;top:0;width:97px;height:46px;background:#1c5b8c"></div>
 <div class="a" style="left:1184px;top:0;width:1px;height:46px;background:#2a4a6a"></div>
 <svg class="a" style="left:0;top:0" width="2010" height="46" viewBox="0 1226 2010 46" fill="none" stroke="#fff" stroke-width="2"><path d="M1055 1236 v24 M1062.3 1236 v24 M1069.5 1236 v24 M1050.5 1241 h24 M1050.5 1248.3 h24 M1050.5 1255.5 h24"/><path d="M1103 1236 v24 M1110.3 1236 v9 M1117.5 1236 v8 M1098.5 1241 h24 M1098.5 1248.3 h11 M1098.5 1255.5 h11"/><path d="M1111 1245 H1115 A7.5 7.5 0 0 1 1115 1260 H1111 M1111 1250 H1115 A2.5 2.5 0 0 1 1115 1255 H1111" fill="none" stroke="#fff" stroke-width="1.8"/><path d="M1111 1245 v5 M1111 1260 v-5" stroke="#fff" stroke-width="1.8"/><path d="M1162 1237 h-11 v23 h6 M1162 1237 l7 8 v2 M1162 1237 v8 h7" stroke="#bfe8ff" stroke-width="1.8"/><path d="M1159 1246 H1163 A7.0 7.0 0 0 1 1163 1260 H1159 M1159 1251 H1163 A2.0 2.0 0 0 1 1163 1255 H1159" fill="none" stroke="#bfe8ff" stroke-width="1.8"/><path d="M1159 1246 v5 M1159 1260 v-5" stroke="#bfe8ff" stroke-width="1.8"/><path d="M1196 1258 l3 -6 l17 -16 l6 6 l-2 2" stroke="#bfe8ff" stroke-width="1.8"/><path d="M1195 1256 l4 4 l3 -3 l-4 -4z" fill="#bfe8ff" stroke="#bfe8ff" stroke-width="1.5"/><path d="M1209 1246 H1213 A7.0 7.0 0 0 1 1213 1260 H1209 M1209 1251 H1213 A2.0 2.0 0 0 1 1213 1255 H1209" fill="none" stroke="#bfe8ff" stroke-width="1.8"/><path d="M1209 1246 v5 M1209 1260 v-5" stroke="#bfe8ff" stroke-width="1.8"/><path d="M1247 1258 l3 -6 l17 -16 l6 6 l-2 2" stroke="#fff" stroke-width="1.8"/><path d="M1246 1256 l4 4 l3 -3 l-4 -4z" fill="#fff" stroke="#fff" stroke-width="1.5"/><path d="M1266 1250 a6 6 0 1 0 5 2" stroke="#5a5ad8" stroke-width="2"/><path d="M1268 1247 l5 1 l-1 5z" fill="#5a5ad8" stroke="none"/><rect x="1292.5" y="1237" width="25" height="23" stroke-width="1.8"/><path d="M1292.5 1241 h25 M1298 1248 h16 l-3 -3 M1312 1254 h-16 l3 3" stroke-width="1.8"/><path d="M1333 1244 l5 5 l5 -5" stroke-width="1.8"/></svg>
 <span class="a" style="left:1378px;top:13px;font-size:16px;color:#eee;white-space:nowrap">X: 9.525 cm = 30'-0", Y: 9.525 cm = 30'-0"</span>
 <span class="a" style="left:1705px;top:13px;font-size:16.4px;color:#eee;white-space:nowrap">106.68 x 76.20 cm</span>
 <span class="a" style="left:1886px;top:13px;font-size:16.4px;color:#eee;white-space:nowrap">(14.89, 39.90)</span>
</div>
<div id="menu" class="a">
<div class="a" style="left:-1px;top:763px;width:302px;height:2px;background:#4a2030"></div><div class="a" style="left:-1px;top:765px;width:302px;height:40px;background:#d6dc34"></div><div class="a" style="left:4px;top:770px;width:292px;height:27px;background:#5a4a98"></div><div class="a" style="left:5px;top:770px;width:289px;height:24px;background:#1e5e8e"></div>


<div class="sep" style="top:171px"></div>
<div class="sep" style="top:210px"></div>
<div class="sep" style="top:283px"></div>
<div class="sep" style="top:557px"></div>
<div class="sep" style="top:662px"></div>
<span class="mi" style="top:7px">Cut</span>
<span class="sc" style="top:7px">Ctrl+X</span>
<span class="mi" style="top:41px">Copy</span>
<span class="sc" style="top:41px">Ctrl+C</span>
<span class="mi" style="top:74px">Paste</span>
<span class="sc" style="top:74px">Ctrl+V</span>
<span class="mi" style="top:108px">Format Painter</span>
<span class="sc" style="top:108px">Ctrl+Shift+C</span>
<span class="mi" style="top:141px">Delete</span>
<span class="sc" style="top:141px">Del</span>
<span class="mi" style="top:180px">Open Pop-Up Note</span>
<span class="mi" style="top:220px">Control Point</span>
<div class="arr" style="top:225px"></div>
<span class="mi dis" style="top:253px">Convert to Arc</span>
<span class="mi" style="top:292px">Layer</span>
<div class="arr" style="top:297px"></div>
<span class="mi" style="top:326px">Order</span>
<div class="arr" style="top:331px"></div>
<span class="mi" style="top:359px">Alignment</span>
<div class="arr" style="top:364px"></div>
<span class="mi" style="top:392px">Edit Action...</span>
<span class="sc" style="top:392px">Ctrl+Shift+E</span>
<span class="mi" style="top:426px">Capture</span>
<div class="arr" style="top:431px"></div>
<span class="mi" style="top:459px">Flatten</span>
<span class="mi" style="top:493px">Lock</span>
<span class="sc" style="top:493px">Ctrl+Shift+L</span>
<span class="mi" style="top:526px">Legend</span>
<div class="arr" style="top:531px"></div>
<span class="mi" style="top:565px">Reply</span>
<span class="mi" style="top:599px">Set Status</span>
<div class="arr" style="top:604px"></div>
<span class="mi" style="top:632px">Check</span>
<span class="mi" style="top:671px">Add to Tool Chest</span>
<div class="arr" style="top:676px"></div>
<span class="mi" style="top:705px">Set as Default</span>
<span class="mi dis" style="top:738px">Apply to Pages...</span>
<span class="mi" style="top:772px">Properties</span>
<svg class="a" style="left:0;top:0" width="303" height="802" viewBox="397 470 303 802" fill="none" stroke="#fff" stroke-width="1.8">
 <path d="M410 484.5 L427.5 494.5 M410 490.5 L427.5 482.5" stroke-width="1.7"/><ellipse cx="406.5" cy="482.5" rx="4.2" ry="3.6" stroke-width="1.7"/><ellipse cx="406.5" cy="492.5" rx="4.2" ry="3.6" stroke-width="1.7"/>
 <path d="M418 511 H403.5 V529.5 H411 M411 515 H421.5 L427.5 521 V534 H411z M421.5 515 v6 h6" stroke-width="1.7"/>
 <path d="M408.5 547 V543.5 H414.5 V547 M418 547 H403.5 V567.5 H413.5 M413.5 550.5 H421.5 L427.5 556.5 V567.5 H413.5z M421.5 550.5 v6 h6" stroke-width="1.7"/>
 <path d="M403.5 589 L411 581 L419 589 L411 600 L409.5 596.5 L407.5 598 L406.5 594 L404.5 595z M411 581 L414 578 L422 586 L419 589 M418 582 L424.5 575.5 L427 578 L420.5 584.5" stroke-width="1.6"/>
 <path d="M407 615.5 L423 630.5 M423 615.5 L407 630.5" stroke-width="1.7"/>
 <path d="M403 746 Q405 724 428 722" stroke="#6a6a6a" stroke-width="1.5"/>
 <path d="M404.5 950 L409.5 934.2 H420.4 L425.5 950z" stroke="#c8c828" stroke-width="1.6"/><path d="M404.5 953 H425.5" stroke="#eaeab0" stroke-width="1.6"/><circle cx="414.7" cy="931.4" r="2.7" stroke="#c8c828" stroke-width="1.4"/>
 <rect x="403" y="995" width="24" height="24"/><path d="M403 1001 h24 M416 1007 h8 M416 1012 h8 M416 1017 h8" stroke-width="1.5"/><path d="M406 1010 l3 -5 l3 5z" fill="#fff" stroke="none"/><circle cx="409" cy="1015" r="2.5" fill="#fff" stroke="none"/>
 <path d="M406 1037 v9 q0 3 3 3 h14 M419 1045 l4 4 l-4 4" stroke-width="1.5"/>
 <path d="M422.12 1250.91 L424.87 1250.91 L424.87 1254.09 L422.12 1254.09 L421.16 1256.41 L423.11 1258.35 L420.85 1260.61 L418.91 1258.66 L416.59 1259.62 L416.59 1262.37 L413.41 1262.37 L413.41 1259.62 L411.09 1258.66 L409.15 1260.61 L406.89 1258.35 L408.84 1256.41 L407.88 1254.09 L405.13 1254.09 L405.13 1250.91 L407.88 1250.91 L408.84 1248.59 L406.89 1246.65 L409.15 1244.39 L411.09 1246.34 L413.41 1245.38 L413.41 1242.63 L416.59 1242.63 L416.59 1245.38 L418.91 1246.34 L420.85 1244.39 L423.11 1246.65 L421.16 1248.59Z" stroke="#e8f4ff" stroke-width="1.6" stroke-linejoin="round"/><circle cx="415" cy="1252.5" r="4.6" stroke="#e8f4ff" stroke-width="1.8"/>
</svg>
</div>
<svg class="a" style="left:568px;top:1245px" width="22" height="30" viewBox="0 0 22 30"><path d="M2 1 L2 23 L7.5 18.5 L11.5 27 L15 25.5 L11 17.5 L18 17.5z" fill="#e4fbfb" stroke="#111" stroke-width="1.3"/></svg></body></html>
